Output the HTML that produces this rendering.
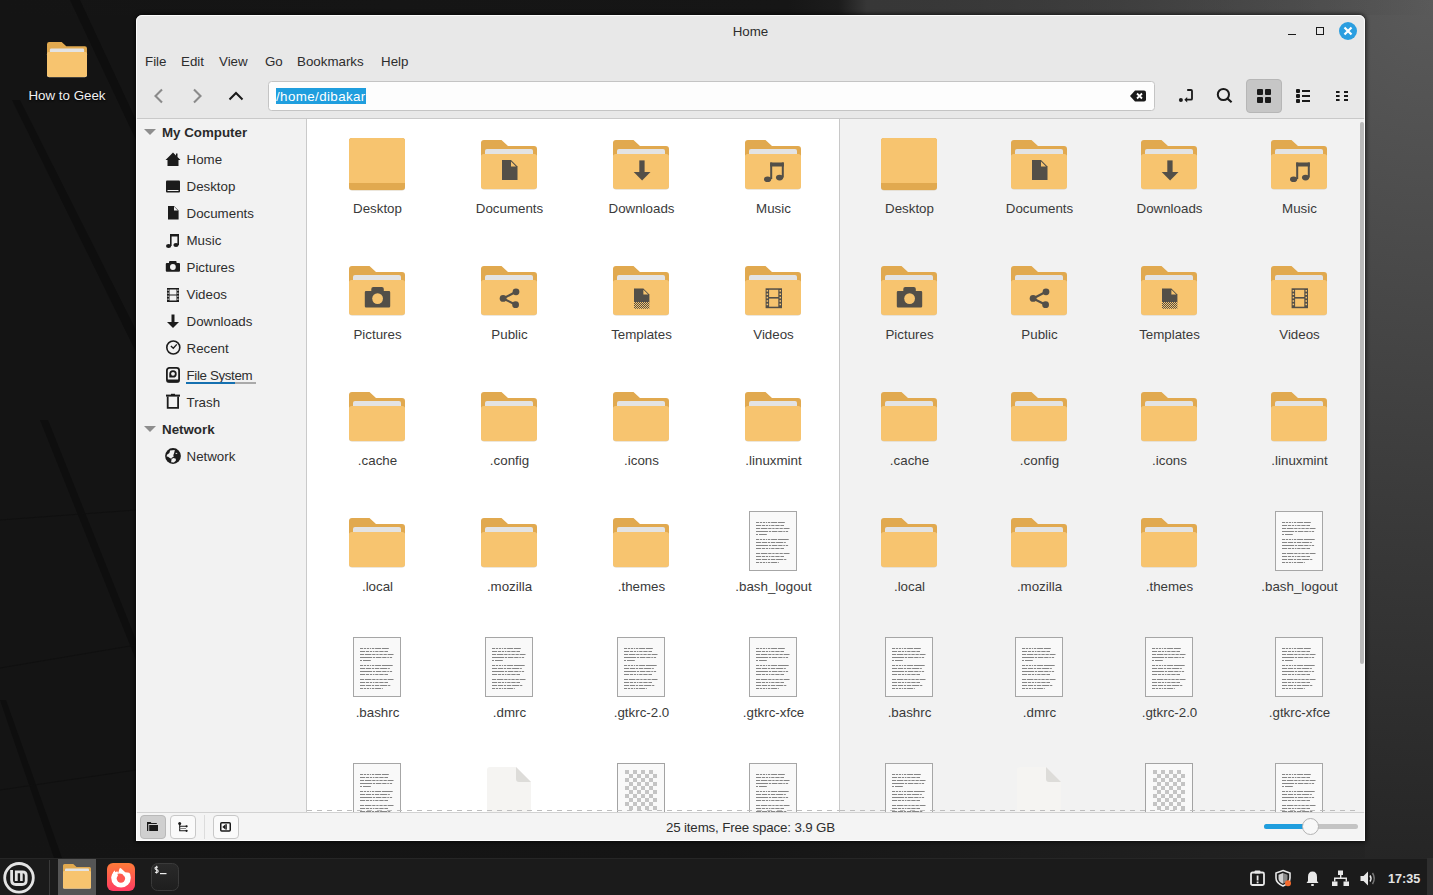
<!DOCTYPE html>
<html><head><meta charset="utf-8"><title>Home</title>
<style>
html,body{margin:0;padding:0;}
body{width:1433px;height:895px;overflow:hidden;position:relative;background:#141414;font-family:"Liberation Sans", sans-serif;}
.t{position:absolute;line-height:20px;white-space:nowrap;}
svg{display:block;overflow:visible;}
</style></head><body>

<svg style="position:absolute;left:0px;top:0px;" width="1433" height="895" viewBox="0 0 1433 895"><defs><radialGradient id="lg" gradientUnits="userSpaceOnUse" cx="1433" cy="0" r="880"><stop offset="0" stop-color="#5a5a5a"/><stop offset="0.6" stop-color="#393939"/><stop offset="1" stop-color="#242424"/></radialGradient><linearGradient id="bs" x1="0" y1="0" x2="1" y2="0"><stop offset="0" stop-color="#141414"/><stop offset="0.5" stop-color="#151515"/><stop offset="1" stop-color="#252525"/></linearGradient><linearGradient id="ts" x1="0" y1="0" x2="1" y2="0"><stop offset="0" stop-color="#141414"/><stop offset="0.55" stop-color="#161616"/><stop offset="0.585" stop-color="#1c1c1c"/><stop offset="0.605" stop-color="#373737"/><stop offset="1" stop-color="#3a3a3a" stop-opacity="0"/></linearGradient><pattern id="hatch" width="2" height="2" patternUnits="userSpaceOnUse"><rect width="1" height="1" fill="#534f48"/><rect x="1" y="1" width="1" height="1" fill="#534f48"/></pattern></defs><rect width="1433" height="895" fill="#141414"/><rect x="0" y="841" width="1433" height="17" fill="url(#bs)"/><path d="M862 0H1433V858H1365V60H1320V15H870Z" fill="url(#lg)"/><rect x="0" y="0" width="1433" height="15" fill="url(#ts)"/><g fill="#0e0e0e"><path d="M70 0L80 0L136 120L136 140Z"/><path d="M12 100L20 100L136 330L136 352Z"/><path d="M40 420L48 420L136 640L136 660Z"/><path d="M0 700L6 700L62 858L54 858Z"/></g><g stroke="#101010" stroke-width="1.2"><path d="M0 520L136 510"/><path d="M0 668L136 645"/><path d="M0 790L136 770"/></g></svg>
<svg style="position:absolute;left:47px;top:42px;" width="40" height="35.7" viewBox="0 0 56 50"><path d="M3 0H20.5L27 6H53Q56 6 56 9V30H0V3Q0 0 3 0Z" fill="#e1a94f"/><rect x="4" y="9" width="48" height="14" rx="2" fill="#e3e3e3"/><rect x="0" y="14.5" width="56" height="35" rx="3" fill="#d9cdb8"/><rect x="0" y="14" width="56" height="35" rx="3" fill="#f7c46f"/></svg>
<div class="t" style="left:-83.0px;width:300px;text-align:center;top:86.38px;font-size:13.33px;color:#f0f0f0;font-weight:normal;text-shadow:0 1px 2px #000;">How to Geek</div>
<div style="position:absolute;left:136px;top:15px;width:1229px;height:826px;box-shadow:0 0 4px 1px rgba(0,0,0,0.65);border-radius:6px 6px 0 0;"></div>
<div style="position:absolute;left:136px;top:15px;width:1229px;height:826px;background:#e8e8e8;border-radius:6px 6px 0 0;overflow:hidden;"></div>
<div class="t" style="left:600.5px;width:300px;text-align:center;top:22.38px;font-size:13.33px;color:#2d2d2d;font-weight:normal;">Home</div>
<div style="position:absolute;left:1288px;top:33.5px;width:8px;height:1.6px;background:#1a1a1a;"></div>
<div style="position:absolute;left:1316px;top:27px;width:8px;height:8px;border:1.6px solid #1a1a1a;box-sizing:border-box;"></div>
<svg style="position:absolute;left:1339px;top:22px;" width="18" height="18" viewBox="0 0 18 18"><circle cx="9" cy="9" r="9" fill="#2b9ee0"/><path d="M5.5 5.5L12.5 12.5M12.5 5.5L5.5 12.5" stroke="#fff" stroke-width="2.2"/></svg>
<div class="t" style="left:145px;top:52.38px;font-size:13.33px;color:#2d2d2d;font-weight:normal;">File</div>
<div class="t" style="left:181px;top:52.38px;font-size:13.33px;color:#2d2d2d;font-weight:normal;">Edit</div>
<div class="t" style="left:219px;top:52.38px;font-size:13.33px;color:#2d2d2d;font-weight:normal;">View</div>
<div class="t" style="left:265px;top:52.38px;font-size:13.33px;color:#2d2d2d;font-weight:normal;">Go</div>
<div class="t" style="left:297px;top:52.38px;font-size:13.33px;color:#2d2d2d;font-weight:normal;">Bookmarks</div>
<div class="t" style="left:381px;top:52.38px;font-size:13.33px;color:#2d2d2d;font-weight:normal;">Help</div>
<svg style="position:absolute;left:150.5px;top:88px;" width="16" height="16" viewBox="0 0 16 16"><path d="M11 1.5L4.5 8L11 14.5" stroke="#8a8a8a" stroke-width="2.1" fill="none"/></svg>
<svg style="position:absolute;left:188.5px;top:88px;" width="16" height="16" viewBox="0 0 16 16"><path d="M5 1.5L11.5 8L5 14.5" stroke="#8a8a8a" stroke-width="2.1" fill="none"/></svg>
<svg style="position:absolute;left:228px;top:88px;" width="16" height="16" viewBox="0 0 16 16"><path d="M1.5 11.5L8 5L14.5 11.5" stroke="#1a1a1a" stroke-width="2" fill="none"/></svg>
<div style="position:absolute;left:267.5px;top:81px;width:887.5px;height:30px;background:#fdfdfd;border:1px solid #c4c4c4;border-radius:3.5px;box-sizing:border-box;"></div>
<div style="position:absolute;left:276px;top:88px;width:90px;height:16px;background:#1f9ede;"></div>
<div class="t" style="left:276px;top:87.38px;font-size:13.33px;color:#ffffff;font-weight:normal;letter-spacing:0.4px;">/home/dibakar</div>
<svg style="position:absolute;left:1130px;top:90px;" width="16" height="12" viewBox="0 0 16 12"><path d="M0 6L5 0.5H14Q16 0.5 16 2.5V9.5Q16 11.5 14 11.5H5Z" fill="#1a1a1a"/><path d="M7 3.5L12 8.5M12 3.5L7 8.5" stroke="#fff" stroke-width="1.8"/></svg>
<svg style="position:absolute;left:1179px;top:88px;" width="16" height="16" viewBox="0 0 16 16"><circle cx="1.9" cy="11.9" r="2" fill="#1a1a1a"/><path d="M8.2 2H12Q13 2 13 3V10.7Q13 11.7 12 11.7H7" stroke="#1a1a1a" stroke-width="1.8" fill="none"/><path d="M5.3 11.7L8.2 9V14.6Z" fill="#1a1a1a"/></svg>
<svg style="position:absolute;left:1216px;top:88px;" width="17" height="16" viewBox="0 0 17 16"><circle cx="7.4" cy="6.5" r="5.6" stroke="#1a1a1a" stroke-width="2" fill="none"/><path d="M11.3 10.4L15.6 14.3" stroke="#1a1a1a" stroke-width="2.1"/></svg>
<div style="position:absolute;left:1246px;top:79px;width:36px;height:34px;background:#c6c6c6;border:1px solid #b6b6b6;border-radius:4px;box-sizing:border-box;"></div>
<svg style="position:absolute;left:1257px;top:89px;" width="15" height="15" viewBox="0 0 15 15"><rect x="0" y="0" width="6" height="6" rx="1" fill="#1a1a1a"/><rect x="8" y="0" width="6" height="6" rx="1" fill="#1a1a1a"/><rect x="0" y="8" width="6" height="6" rx="1" fill="#1a1a1a"/><rect x="8" y="8" width="6" height="6" rx="1" fill="#1a1a1a"/></svg>
<svg style="position:absolute;left:1296px;top:89px;" width="15" height="15" viewBox="0 0 15 15"><rect x="0" y="0" width="4" height="4" rx="1" fill="#1a1a1a"/><rect x="0" y="5" width="4" height="4" rx="1" fill="#1a1a1a"/><rect x="0" y="10" width="4" height="4" rx="1" fill="#1a1a1a"/><rect x="6" y="1" width="8" height="2" fill="#1a1a1a"/><rect x="6" y="6" width="8" height="2" fill="#1a1a1a"/><rect x="6" y="11" width="8" height="2" fill="#1a1a1a"/></svg>
<svg style="position:absolute;left:1336px;top:91px;" width="13" height="11" viewBox="0 0 13 11"><rect x="0" y="0" width="3.6" height="2" fill="#1a1a1a"/><rect x="0" y="4" width="3.6" height="2" fill="#1a1a1a"/><rect x="0" y="8" width="3.6" height="2" fill="#1a1a1a"/><rect x="8" y="0" width="4" height="2" fill="#1a1a1a"/><rect x="8" y="4" width="4" height="2" fill="#1a1a1a"/><rect x="8" y="8" width="4" height="2" fill="#1a1a1a"/></svg>
<div style="position:absolute;left:136px;top:118px;width:1229px;height:1px;background:#c9c9c9;"></div>
<div style="position:absolute;left:136px;top:119px;width:170px;height:693px;background:#f2f2f2;"></div>
<div style="position:absolute;left:306px;top:119px;width:1px;height:693px;background:#cacaca;"></div>
<svg style="position:absolute;left:144px;top:129px;" width="12" height="6" viewBox="0 0 12 6"><path d="M0 0H12L6 6Z" fill="#8e8e8e"/></svg>
<div class="t" style="left:162px;top:123.38px;font-size:13.33px;color:#2a2a2a;font-weight:bold;">My Computer</div>
<svg style="position:absolute;left:165px;top:152px;" width="16" height="16" viewBox="0 0 16 16"><path d="M8 0.5L0.5 8H2.5V14H13.5V8H15.5L12.5 5V1.5H11V3.5Z" fill="#1c1c1c"/></svg>
<div class="t" style="left:186.5px;top:150.38px;font-size:13.33px;color:#2e2e2e;font-weight:normal;">Home</div>
<svg style="position:absolute;left:165px;top:179px;" width="16" height="16" viewBox="0 0 16 16"><rect x="1" y="1.5" width="14" height="12" rx="1" fill="#1c1c1c"/><rect x="2.5" y="11" width="11" height="1" fill="#f2f2f2"/></svg>
<div class="t" style="left:186.5px;top:177.38px;font-size:13.33px;color:#2e2e2e;font-weight:normal;">Desktop</div>
<svg style="position:absolute;left:165px;top:206px;" width="16" height="16" viewBox="0 0 16 16"><path d="M3 0H9L13.6 4.6V13.6H3Z" fill="#1c1c1c"/><path d="M9 0.6V4.6H13" fill="#f2f2f2"/></svg>
<div class="t" style="left:186.5px;top:204.38px;font-size:13.33px;color:#2e2e2e;font-weight:normal;">Documents</div>
<svg style="position:absolute;left:165px;top:233px;" width="16" height="16" viewBox="0 0 16 16"><rect x="5" y="1" width="9" height="2.5" fill="#1c1c1c"/><rect x="5" y="1" width="1.6" height="12" fill="#1c1c1c"/><rect x="12.4" y="1" width="1.6" height="11" fill="#1c1c1c"/><ellipse cx="3.6" cy="13" rx="2.6" ry="2" fill="#1c1c1c"/><ellipse cx="11" cy="12" rx="2.6" ry="2" fill="#1c1c1c"/></svg>
<div class="t" style="left:186.5px;top:231.38px;font-size:13.33px;color:#2e2e2e;font-weight:normal;">Music</div>
<svg style="position:absolute;left:165px;top:260px;" width="16" height="16" viewBox="0 0 16 16"><path d="M4 3V2Q4 0.9 5 0.9H10.6Q11.6 0.9 11.6 2V3H14Q15 3 15 4V10.7Q15 11.7 14 11.7H1.8Q0.8 11.7 0.8 10.7V4Q0.8 3 1.8 3Z" fill="#1c1c1c"/><circle cx="7.9" cy="7" r="2.9" fill="#f2f2f2"/></svg>
<div class="t" style="left:186.5px;top:258.38px;font-size:13.33px;color:#2e2e2e;font-weight:normal;">Pictures</div>
<svg style="position:absolute;left:165px;top:287px;" width="16" height="16" viewBox="0 0 16 16"><rect x="2" y="1" width="12" height="14" fill="#1c1c1c"/><rect x="4.5" y="2.5" width="7" height="5" fill="#f2f2f2"/><rect x="4.5" y="8.5" width="7" height="5" fill="#f2f2f2"/><rect x="2.6" y="2.5" width="1" height="1.5" fill="#f2f2f2"/><rect x="12.4" y="2.5" width="1" height="1.5" fill="#f2f2f2"/><rect x="2.6" y="5.5" width="1" height="1.5" fill="#f2f2f2"/><rect x="12.4" y="5.5" width="1" height="1.5" fill="#f2f2f2"/><rect x="2.6" y="8.5" width="1" height="1.5" fill="#f2f2f2"/><rect x="12.4" y="8.5" width="1" height="1.5" fill="#f2f2f2"/><rect x="2.6" y="11.5" width="1" height="1.5" fill="#f2f2f2"/><rect x="12.4" y="11.5" width="1" height="1.5" fill="#f2f2f2"/></svg>
<div class="t" style="left:186.5px;top:285.38px;font-size:13.33px;color:#2e2e2e;font-weight:normal;">Videos</div>
<svg style="position:absolute;left:165px;top:314px;" width="16" height="16" viewBox="0 0 16 16"><rect x="6.5" y="0.5" width="3" height="8" fill="#1c1c1c"/><path d="M2 8H14L8 14Z" fill="#1c1c1c"/></svg>
<div class="t" style="left:186.5px;top:312.38px;font-size:13.33px;color:#2e2e2e;font-weight:normal;">Downloads</div>
<svg style="position:absolute;left:165px;top:341px;" width="16" height="16" viewBox="0 0 16 16"><circle cx="8.3" cy="6.5" r="6.5" stroke="#1c1c1c" stroke-width="1.6" fill="none"/><path d="M5.9 5L8.3 7.2L11.8 3.4" stroke="#1c1c1c" stroke-width="1.4" fill="none"/></svg>
<div class="t" style="left:186.5px;top:339.38px;font-size:13.33px;color:#2e2e2e;font-weight:normal;">Recent</div>
<svg style="position:absolute;left:165px;top:368px;" width="16" height="16" viewBox="0 0 16 16"><rect x="1.9" y="-0.1" width="12.2" height="13.9" rx="2.5" stroke="#1c1c1c" stroke-width="1.8" fill="none"/><rect x="1.5" y="11.6" width="13" height="3" rx="1" fill="#1c1c1c"/><path d="M4.3 9.6V5.8A3.7 3.7 0 1 1 8 9.6Z" fill="#1c1c1c"/><circle cx="8" cy="5.8" r="1.9" fill="#f2f2f2"/></svg>
<div class="t" style="left:186.5px;top:366.38px;font-size:13.33px;color:#2e2e2e;font-weight:normal;letter-spacing:-0.35px;">File System</div>
<svg style="position:absolute;left:165px;top:395px;" width="16" height="16" viewBox="0 0 16 16"><rect x="1" y="-0.4" width="14" height="2" fill="#1c1c1c"/><rect x="6" y="-1.2" width="4" height="1.5" fill="#1c1c1c"/><path d="M2.7 1.6V12.8H13.1V1.6" stroke="#1c1c1c" stroke-width="1.8" fill="none"/></svg>
<div class="t" style="left:186.5px;top:393.38px;font-size:13.33px;color:#2e2e2e;font-weight:normal;">Trash</div>
<div style="position:absolute;left:186px;top:382px;width:70px;height:2px;background:#aaaaaa;"></div>
<div style="position:absolute;left:186px;top:382px;width:49px;height:2px;background:#1570b0;"></div>
<svg style="position:absolute;left:144px;top:426px;" width="12" height="6" viewBox="0 0 12 6"><path d="M0 0H12L6 6Z" fill="#8e8e8e"/></svg>
<div class="t" style="left:162px;top:420.38px;font-size:13.33px;color:#2a2a2a;font-weight:bold;">Network</div>
<svg style="position:absolute;left:165px;top:449px;" width="16" height="16" viewBox="0 0 16 16"><circle cx="8" cy="7" r="7.9" fill="#1c1c1c"/><path d="M5.1 1.4L9.8 1.1L9.3 3.4L8.3 6.3L8.8 7.5L6.8 8.8L6.3 9.8L4.4 8.8L3.1 7.8L1.6 7.6L2 5.8L4.4 4.1Z" fill="#f2f2f2"/><path d="M6.6 10L8.5 8.9L10.8 9.8L10.8 11.7L8.8 13.6L6.1 13.2Z" fill="#f2f2f2"/><rect x="10.6" y="3.9" width="1.6" height="0.9" fill="#f2f2f2"/></svg>
<div class="t" style="left:186.5px;top:447.38px;font-size:13.33px;color:#2e2e2e;font-weight:normal;">Network</div>
<div style="position:absolute;left:307px;top:119px;width:532px;height:693px;background:#ffffff;"></div>
<div style="position:absolute;left:839px;top:119px;width:1px;height:693px;background:#c8c8c8;"></div>
<div style="position:absolute;left:840px;top:119px;width:525px;height:693px;background:#f2f2f2;"></div>
<svg style="position:absolute;left:349px;top:138px;" width="56" height="53" viewBox="0 0 56 53"><rect x="0" y="0.5" width="56" height="52" rx="3" fill="#d9cdb8"/><rect x="0" y="0" width="56" height="52" rx="3" fill="#e1a94f"/><path d="M3 0H53Q56 0 56 3V45H0V3Q0 0 3 0Z" fill="#f7c46f"/></svg>
<div class="t" style="left:312.5px;width:130px;text-align:center;top:199.38px;font-size:13.33px;color:#3a3a3a;font-weight:normal;">Desktop</div>
<svg style="position:absolute;left:481px;top:140px;" width="56" height="50" viewBox="0 0 56 50"><path d="M3 0H20.5L27 6H53Q56 6 56 9V30H0V3Q0 0 3 0Z" fill="#e1a94f"/><rect x="4" y="9" width="48" height="14" rx="2" fill="#e3e3e3"/><rect x="0" y="14.5" width="56" height="35" rx="3" fill="#d9cdb8"/><rect x="0" y="14" width="56" height="35" rx="3" fill="#f7c46f"/><path d="M21 20H30L36.5 26.5V40H21Z" fill="#534f48"/><path d="M30 21.5V26.5H35Z" fill="#f7c46f"/></svg>
<div class="t" style="left:444.5px;width:130px;text-align:center;top:199.38px;font-size:13.33px;color:#3a3a3a;font-weight:normal;">Documents</div>
<svg style="position:absolute;left:613px;top:140px;" width="56" height="50" viewBox="0 0 56 50"><path d="M3 0H20.5L27 6H53Q56 6 56 9V30H0V3Q0 0 3 0Z" fill="#e1a94f"/><rect x="4" y="9" width="48" height="14" rx="2" fill="#e3e3e3"/><rect x="0" y="14.5" width="56" height="35" rx="3" fill="#d9cdb8"/><rect x="0" y="14" width="56" height="35" rx="3" fill="#f7c46f"/><rect x="26.3" y="20.4" width="5.3" height="12.5" fill="#534f48"/><path d="M20.7 32H37.5L29.1 40.4Z" fill="#534f48"/></svg>
<div class="t" style="left:576.5px;width:130px;text-align:center;top:199.38px;font-size:13.33px;color:#3a3a3a;font-weight:normal;">Downloads</div>
<svg style="position:absolute;left:745px;top:140px;" width="56" height="50" viewBox="0 0 56 50"><path d="M3 0H20.5L27 6H53Q56 6 56 9V30H0V3Q0 0 3 0Z" fill="#e1a94f"/><rect x="4" y="9" width="48" height="14" rx="2" fill="#e3e3e3"/><rect x="0" y="14.5" width="56" height="35" rx="3" fill="#d9cdb8"/><rect x="0" y="14" width="56" height="35" rx="3" fill="#f7c46f"/><rect x="25.2" y="22.5" width="13.6" height="4" fill="#534f48"/><rect x="25.2" y="22.5" width="2" height="16.5" fill="#534f48"/><rect x="36.8" y="22.5" width="2" height="15" fill="#534f48"/><ellipse cx="22.6" cy="39.2" rx="3.6" ry="2.8" fill="#534f48"/><ellipse cx="34.6" cy="37.6" rx="3.6" ry="2.8" fill="#534f48"/></svg>
<div class="t" style="left:708.5px;width:130px;text-align:center;top:199.38px;font-size:13.33px;color:#3a3a3a;font-weight:normal;">Music</div>
<svg style="position:absolute;left:349px;top:266px;" width="56" height="50" viewBox="0 0 56 50"><path d="M3 0H20.5L27 6H53Q56 6 56 9V30H0V3Q0 0 3 0Z" fill="#e1a94f"/><rect x="4" y="9" width="48" height="14" rx="2" fill="#e3e3e3"/><rect x="0" y="14.5" width="56" height="35" rx="3" fill="#d9cdb8"/><rect x="0" y="14" width="56" height="35" rx="3" fill="#f7c46f"/><path d="M22.3 25V23Q22.3 21 24.3 21H32.8Q34.8 21 34.8 23V25H40Q41.2 25 41.2 26.2V40.3Q41.2 41.5 40 41.5H17Q15.8 41.5 15.8 40.3V26.2Q15.8 25 17 25Z" fill="#534f48"/><circle cx="28.6" cy="32.6" r="5.4" fill="#f7c46f"/></svg>
<div class="t" style="left:312.5px;width:130px;text-align:center;top:325.38px;font-size:13.33px;color:#3a3a3a;font-weight:normal;">Pictures</div>
<svg style="position:absolute;left:481px;top:266px;" width="56" height="50" viewBox="0 0 56 50"><path d="M3 0H20.5L27 6H53Q56 6 56 9V30H0V3Q0 0 3 0Z" fill="#e1a94f"/><rect x="4" y="9" width="48" height="14" rx="2" fill="#e3e3e3"/><rect x="0" y="14.5" width="56" height="35" rx="3" fill="#d9cdb8"/><rect x="0" y="14" width="56" height="35" rx="3" fill="#f7c46f"/><path d="M35 25.8L22.1 32.4L34.6 38.7" stroke="#534f48" stroke-width="2.2" fill="none"/><circle cx="35" cy="25.8" r="3.4" fill="#534f48"/><circle cx="22.1" cy="32.4" r="3.4" fill="#534f48"/><circle cx="34.6" cy="38.7" r="3.4" fill="#534f48"/></svg>
<div class="t" style="left:444.5px;width:130px;text-align:center;top:325.38px;font-size:13.33px;color:#3a3a3a;font-weight:normal;">Public</div>
<svg style="position:absolute;left:613px;top:266px;" width="56" height="50" viewBox="0 0 56 50"><path d="M3 0H20.5L27 6H53Q56 6 56 9V30H0V3Q0 0 3 0Z" fill="#e1a94f"/><rect x="4" y="9" width="48" height="14" rx="2" fill="#e3e3e3"/><rect x="0" y="14.5" width="56" height="35" rx="3" fill="#d9cdb8"/><rect x="0" y="14" width="56" height="35" rx="3" fill="#f7c46f"/><path d="M21 22.6H30.4L36.4 28.6V36H21Z" fill="#534f48"/><path d="M30.4 23.8V28.6H35.2Z" fill="#f7c46f"/><rect x="21" y="36" width="15.4" height="6.8" fill="url(#hatch)"/></svg>
<div class="t" style="left:576.5px;width:130px;text-align:center;top:325.38px;font-size:13.33px;color:#3a3a3a;font-weight:normal;">Templates</div>
<svg style="position:absolute;left:745px;top:266px;" width="56" height="50" viewBox="0 0 56 50"><path d="M3 0H20.5L27 6H53Q56 6 56 9V30H0V3Q0 0 3 0Z" fill="#e1a94f"/><rect x="4" y="9" width="48" height="14" rx="2" fill="#e3e3e3"/><rect x="0" y="14.5" width="56" height="35" rx="3" fill="#d9cdb8"/><rect x="0" y="14" width="56" height="35" rx="3" fill="#f7c46f"/><rect x="20.6" y="22.3" width="16.4" height="19.9" fill="#534f48"/><rect x="24.1" y="23.8" width="9.2" height="7.2" fill="#f7c46f"/><rect x="24.1" y="32.6" width="9.2" height="8.1" fill="#f7c46f"/><rect x="21.6" y="24.0" width="1.5" height="1.6" fill="#f7c46f"/><rect x="34.5" y="24.0" width="1.5" height="1.6" fill="#f7c46f"/><rect x="21.6" y="27.4" width="1.5" height="1.6" fill="#f7c46f"/><rect x="34.5" y="27.4" width="1.5" height="1.6" fill="#f7c46f"/><rect x="21.6" y="30.8" width="1.5" height="1.6" fill="#f7c46f"/><rect x="34.5" y="30.8" width="1.5" height="1.6" fill="#f7c46f"/><rect x="21.6" y="34.2" width="1.5" height="1.6" fill="#f7c46f"/><rect x="34.5" y="34.2" width="1.5" height="1.6" fill="#f7c46f"/><rect x="21.6" y="37.6" width="1.5" height="1.6" fill="#f7c46f"/><rect x="34.5" y="37.6" width="1.5" height="1.6" fill="#f7c46f"/></svg>
<div class="t" style="left:708.5px;width:130px;text-align:center;top:325.38px;font-size:13.33px;color:#3a3a3a;font-weight:normal;">Videos</div>
<svg style="position:absolute;left:349px;top:392px;" width="56" height="50" viewBox="0 0 56 50"><path d="M3 0H20.5L27 6H53Q56 6 56 9V30H0V3Q0 0 3 0Z" fill="#e1a94f"/><rect x="4" y="9" width="48" height="14" rx="2" fill="#e3e3e3"/><rect x="0" y="14.5" width="56" height="35" rx="3" fill="#d9cdb8"/><rect x="0" y="14" width="56" height="35" rx="3" fill="#f7c46f"/></svg>
<div class="t" style="left:312.5px;width:130px;text-align:center;top:451.38px;font-size:13.33px;color:#3a3a3a;font-weight:normal;">.cache</div>
<svg style="position:absolute;left:481px;top:392px;" width="56" height="50" viewBox="0 0 56 50"><path d="M3 0H20.5L27 6H53Q56 6 56 9V30H0V3Q0 0 3 0Z" fill="#e1a94f"/><rect x="4" y="9" width="48" height="14" rx="2" fill="#e3e3e3"/><rect x="0" y="14.5" width="56" height="35" rx="3" fill="#d9cdb8"/><rect x="0" y="14" width="56" height="35" rx="3" fill="#f7c46f"/></svg>
<div class="t" style="left:444.5px;width:130px;text-align:center;top:451.38px;font-size:13.33px;color:#3a3a3a;font-weight:normal;">.config</div>
<svg style="position:absolute;left:613px;top:392px;" width="56" height="50" viewBox="0 0 56 50"><path d="M3 0H20.5L27 6H53Q56 6 56 9V30H0V3Q0 0 3 0Z" fill="#e1a94f"/><rect x="4" y="9" width="48" height="14" rx="2" fill="#e3e3e3"/><rect x="0" y="14.5" width="56" height="35" rx="3" fill="#d9cdb8"/><rect x="0" y="14" width="56" height="35" rx="3" fill="#f7c46f"/></svg>
<div class="t" style="left:576.5px;width:130px;text-align:center;top:451.38px;font-size:13.33px;color:#3a3a3a;font-weight:normal;">.icons</div>
<svg style="position:absolute;left:745px;top:392px;" width="56" height="50" viewBox="0 0 56 50"><path d="M3 0H20.5L27 6H53Q56 6 56 9V30H0V3Q0 0 3 0Z" fill="#e1a94f"/><rect x="4" y="9" width="48" height="14" rx="2" fill="#e3e3e3"/><rect x="0" y="14.5" width="56" height="35" rx="3" fill="#d9cdb8"/><rect x="0" y="14" width="56" height="35" rx="3" fill="#f7c46f"/></svg>
<div class="t" style="left:708.5px;width:130px;text-align:center;top:451.38px;font-size:13.33px;color:#3a3a3a;font-weight:normal;">.linuxmint</div>
<svg style="position:absolute;left:349px;top:518px;" width="56" height="50" viewBox="0 0 56 50"><path d="M3 0H20.5L27 6H53Q56 6 56 9V30H0V3Q0 0 3 0Z" fill="#e1a94f"/><rect x="4" y="9" width="48" height="14" rx="2" fill="#e3e3e3"/><rect x="0" y="14.5" width="56" height="35" rx="3" fill="#d9cdb8"/><rect x="0" y="14" width="56" height="35" rx="3" fill="#f7c46f"/></svg>
<div class="t" style="left:312.5px;width:130px;text-align:center;top:577.38px;font-size:13.33px;color:#3a3a3a;font-weight:normal;">.local</div>
<svg style="position:absolute;left:481px;top:518px;" width="56" height="50" viewBox="0 0 56 50"><path d="M3 0H20.5L27 6H53Q56 6 56 9V30H0V3Q0 0 3 0Z" fill="#e1a94f"/><rect x="4" y="9" width="48" height="14" rx="2" fill="#e3e3e3"/><rect x="0" y="14.5" width="56" height="35" rx="3" fill="#d9cdb8"/><rect x="0" y="14" width="56" height="35" rx="3" fill="#f7c46f"/></svg>
<div class="t" style="left:444.5px;width:130px;text-align:center;top:577.38px;font-size:13.33px;color:#3a3a3a;font-weight:normal;">.mozilla</div>
<svg style="position:absolute;left:613px;top:518px;" width="56" height="50" viewBox="0 0 56 50"><path d="M3 0H20.5L27 6H53Q56 6 56 9V30H0V3Q0 0 3 0Z" fill="#e1a94f"/><rect x="4" y="9" width="48" height="14" rx="2" fill="#e3e3e3"/><rect x="0" y="14.5" width="56" height="35" rx="3" fill="#d9cdb8"/><rect x="0" y="14" width="56" height="35" rx="3" fill="#f7c46f"/></svg>
<div class="t" style="left:576.5px;width:130px;text-align:center;top:577.38px;font-size:13.33px;color:#3a3a3a;font-weight:normal;">.themes</div>
<svg style="position:absolute;left:749px;top:511px;" width="48" height="60" viewBox="0 0 48 60"><rect x="0.5" y="0.5" width="47" height="59" fill="#f9f9f9" stroke="#a6a6a6"/><line x1="7" y1="11.5" x2="35.8" y2="11.5" stroke="#858585" stroke-width="1" stroke-dasharray="3 0.8 2.3 0.8 2.3 0.8 1.2 0.8 2.3 0.8 6 0.8 7 50"/><line x1="7" y1="14.5" x2="35" y2="14.5" stroke="#858585" stroke-width="1" stroke-dasharray="5 0.8 3.3 0.8 2.3 0.8 1.4 0.8 3.3 0.8 4.3 0.8 4.1 50"/><line x1="7" y1="17.5" x2="40.5" y2="17.5" stroke="#858585" stroke-width="1" stroke-dasharray="4.1 0.8 6.5 0.8 3.3 0.8 2.3 0.8 3.3 0.8 3.3 0.8 6.6 50"/><line x1="7" y1="20.5" x2="39.1" y2="20.5" stroke="#858585" stroke-width="1" stroke-dasharray="12 0.8 2.3 0.8 5.5 0.8 4.3 0.8 1.6 0.8 3 50"/><line x1="7" y1="23.5" x2="17.8" y2="23.5" stroke="#858585" stroke-width="1" stroke-dasharray="2 1 7.8 50"/><line x1="7" y1="28.5" x2="39.7" y2="28.5" stroke="#858585" stroke-width="1" stroke-dasharray="3 0.8 2.3 0.8 2.3 0.8 1.2 0.8 2.3 0.8 6 0.8 11 50"/><line x1="7" y1="31.5" x2="36.8" y2="31.5" stroke="#858585" stroke-width="1" stroke-dasharray="5 0.8 5.3 0.8 2.3 0.8 4.3 0.8 7.2 0.8 2.2 50"/><line x1="7" y1="34.5" x2="39.1" y2="34.5" stroke="#858585" stroke-width="1" stroke-dasharray="12 0.8 2.3 0.8 5.5 0.8 4.3 0.8 1.6 0.8 3 50"/><line x1="7" y1="37.5" x2="35" y2="37.5" stroke="#858585" stroke-width="1" stroke-dasharray="5 0.8 3.3 0.8 2.3 0.8 1.4 0.8 3.3 0.8 4.3 0.8 4.1 50"/><line x1="7" y1="42.5" x2="40.5" y2="42.5" stroke="#858585" stroke-width="1" stroke-dasharray="4.1 0.8 6.5 0.8 3.3 0.8 2.3 0.8 3.3 0.8 3.3 0.8 6.6 50"/><line x1="7" y1="45.5" x2="35" y2="45.5" stroke="#858585" stroke-width="1" stroke-dasharray="5 0.8 3.3 0.8 2.3 0.8 1.4 0.8 3.3 0.8 4.3 0.8 4.1 50"/><line x1="7" y1="48.5" x2="37.8" y2="48.5" stroke="#858585" stroke-width="1" stroke-dasharray="5 0.8 5.3 0.8 2.3 0.8 4.3 0.8 7.2 0.8 2.2 50"/><line x1="7" y1="51.5" x2="29.8" y2="51.5" stroke="#858585" stroke-width="1" stroke-dasharray="3 0.8 2.3 0.8 2.3 0.8 1.2 0.8 2.3 0.8 6 0.8 7 50"/></svg>
<div class="t" style="left:708.5px;width:130px;text-align:center;top:577.38px;font-size:13.33px;color:#3a3a3a;font-weight:normal;">.bash_logout</div>
<svg style="position:absolute;left:353px;top:637px;" width="48" height="60" viewBox="0 0 48 60"><rect x="0.5" y="0.5" width="47" height="59" fill="#f9f9f9" stroke="#a6a6a6"/><line x1="7" y1="11.5" x2="35.8" y2="11.5" stroke="#858585" stroke-width="1" stroke-dasharray="3 0.8 2.3 0.8 2.3 0.8 1.2 0.8 2.3 0.8 6 0.8 7 50"/><line x1="7" y1="14.5" x2="35" y2="14.5" stroke="#858585" stroke-width="1" stroke-dasharray="5 0.8 3.3 0.8 2.3 0.8 1.4 0.8 3.3 0.8 4.3 0.8 4.1 50"/><line x1="7" y1="17.5" x2="40.5" y2="17.5" stroke="#858585" stroke-width="1" stroke-dasharray="4.1 0.8 6.5 0.8 3.3 0.8 2.3 0.8 3.3 0.8 3.3 0.8 6.6 50"/><line x1="7" y1="20.5" x2="39.1" y2="20.5" stroke="#858585" stroke-width="1" stroke-dasharray="12 0.8 2.3 0.8 5.5 0.8 4.3 0.8 1.6 0.8 3 50"/><line x1="7" y1="23.5" x2="17.8" y2="23.5" stroke="#858585" stroke-width="1" stroke-dasharray="2 1 7.8 50"/><line x1="7" y1="28.5" x2="39.7" y2="28.5" stroke="#858585" stroke-width="1" stroke-dasharray="3 0.8 2.3 0.8 2.3 0.8 1.2 0.8 2.3 0.8 6 0.8 11 50"/><line x1="7" y1="31.5" x2="36.8" y2="31.5" stroke="#858585" stroke-width="1" stroke-dasharray="5 0.8 5.3 0.8 2.3 0.8 4.3 0.8 7.2 0.8 2.2 50"/><line x1="7" y1="34.5" x2="39.1" y2="34.5" stroke="#858585" stroke-width="1" stroke-dasharray="12 0.8 2.3 0.8 5.5 0.8 4.3 0.8 1.6 0.8 3 50"/><line x1="7" y1="37.5" x2="35" y2="37.5" stroke="#858585" stroke-width="1" stroke-dasharray="5 0.8 3.3 0.8 2.3 0.8 1.4 0.8 3.3 0.8 4.3 0.8 4.1 50"/><line x1="7" y1="42.5" x2="40.5" y2="42.5" stroke="#858585" stroke-width="1" stroke-dasharray="4.1 0.8 6.5 0.8 3.3 0.8 2.3 0.8 3.3 0.8 3.3 0.8 6.6 50"/><line x1="7" y1="45.5" x2="35" y2="45.5" stroke="#858585" stroke-width="1" stroke-dasharray="5 0.8 3.3 0.8 2.3 0.8 1.4 0.8 3.3 0.8 4.3 0.8 4.1 50"/><line x1="7" y1="48.5" x2="37.8" y2="48.5" stroke="#858585" stroke-width="1" stroke-dasharray="5 0.8 5.3 0.8 2.3 0.8 4.3 0.8 7.2 0.8 2.2 50"/><line x1="7" y1="51.5" x2="29.8" y2="51.5" stroke="#858585" stroke-width="1" stroke-dasharray="3 0.8 2.3 0.8 2.3 0.8 1.2 0.8 2.3 0.8 6 0.8 7 50"/></svg>
<div class="t" style="left:312.5px;width:130px;text-align:center;top:703.38px;font-size:13.33px;color:#3a3a3a;font-weight:normal;">.bashrc</div>
<svg style="position:absolute;left:485px;top:637px;" width="48" height="60" viewBox="0 0 48 60"><rect x="0.5" y="0.5" width="47" height="59" fill="#f9f9f9" stroke="#a6a6a6"/><line x1="7" y1="11.5" x2="35.8" y2="11.5" stroke="#858585" stroke-width="1" stroke-dasharray="3 0.8 2.3 0.8 2.3 0.8 1.2 0.8 2.3 0.8 6 0.8 7 50"/><line x1="7" y1="14.5" x2="35" y2="14.5" stroke="#858585" stroke-width="1" stroke-dasharray="5 0.8 3.3 0.8 2.3 0.8 1.4 0.8 3.3 0.8 4.3 0.8 4.1 50"/><line x1="7" y1="17.5" x2="40.5" y2="17.5" stroke="#858585" stroke-width="1" stroke-dasharray="4.1 0.8 6.5 0.8 3.3 0.8 2.3 0.8 3.3 0.8 3.3 0.8 6.6 50"/><line x1="7" y1="20.5" x2="39.1" y2="20.5" stroke="#858585" stroke-width="1" stroke-dasharray="12 0.8 2.3 0.8 5.5 0.8 4.3 0.8 1.6 0.8 3 50"/><line x1="7" y1="23.5" x2="17.8" y2="23.5" stroke="#858585" stroke-width="1" stroke-dasharray="2 1 7.8 50"/><line x1="7" y1="28.5" x2="39.7" y2="28.5" stroke="#858585" stroke-width="1" stroke-dasharray="3 0.8 2.3 0.8 2.3 0.8 1.2 0.8 2.3 0.8 6 0.8 11 50"/><line x1="7" y1="31.5" x2="36.8" y2="31.5" stroke="#858585" stroke-width="1" stroke-dasharray="5 0.8 5.3 0.8 2.3 0.8 4.3 0.8 7.2 0.8 2.2 50"/><line x1="7" y1="34.5" x2="39.1" y2="34.5" stroke="#858585" stroke-width="1" stroke-dasharray="12 0.8 2.3 0.8 5.5 0.8 4.3 0.8 1.6 0.8 3 50"/><line x1="7" y1="37.5" x2="35" y2="37.5" stroke="#858585" stroke-width="1" stroke-dasharray="5 0.8 3.3 0.8 2.3 0.8 1.4 0.8 3.3 0.8 4.3 0.8 4.1 50"/><line x1="7" y1="42.5" x2="40.5" y2="42.5" stroke="#858585" stroke-width="1" stroke-dasharray="4.1 0.8 6.5 0.8 3.3 0.8 2.3 0.8 3.3 0.8 3.3 0.8 6.6 50"/><line x1="7" y1="45.5" x2="35" y2="45.5" stroke="#858585" stroke-width="1" stroke-dasharray="5 0.8 3.3 0.8 2.3 0.8 1.4 0.8 3.3 0.8 4.3 0.8 4.1 50"/><line x1="7" y1="48.5" x2="37.8" y2="48.5" stroke="#858585" stroke-width="1" stroke-dasharray="5 0.8 5.3 0.8 2.3 0.8 4.3 0.8 7.2 0.8 2.2 50"/><line x1="7" y1="51.5" x2="29.8" y2="51.5" stroke="#858585" stroke-width="1" stroke-dasharray="3 0.8 2.3 0.8 2.3 0.8 1.2 0.8 2.3 0.8 6 0.8 7 50"/></svg>
<div class="t" style="left:444.5px;width:130px;text-align:center;top:703.38px;font-size:13.33px;color:#3a3a3a;font-weight:normal;">.dmrc</div>
<svg style="position:absolute;left:617px;top:637px;" width="48" height="60" viewBox="0 0 48 60"><rect x="0.5" y="0.5" width="47" height="59" fill="#f9f9f9" stroke="#a6a6a6"/><line x1="7" y1="11.5" x2="35.8" y2="11.5" stroke="#858585" stroke-width="1" stroke-dasharray="3 0.8 2.3 0.8 2.3 0.8 1.2 0.8 2.3 0.8 6 0.8 7 50"/><line x1="7" y1="14.5" x2="35" y2="14.5" stroke="#858585" stroke-width="1" stroke-dasharray="5 0.8 3.3 0.8 2.3 0.8 1.4 0.8 3.3 0.8 4.3 0.8 4.1 50"/><line x1="7" y1="17.5" x2="40.5" y2="17.5" stroke="#858585" stroke-width="1" stroke-dasharray="4.1 0.8 6.5 0.8 3.3 0.8 2.3 0.8 3.3 0.8 3.3 0.8 6.6 50"/><line x1="7" y1="20.5" x2="39.1" y2="20.5" stroke="#858585" stroke-width="1" stroke-dasharray="12 0.8 2.3 0.8 5.5 0.8 4.3 0.8 1.6 0.8 3 50"/><line x1="7" y1="23.5" x2="17.8" y2="23.5" stroke="#858585" stroke-width="1" stroke-dasharray="2 1 7.8 50"/><line x1="7" y1="28.5" x2="39.7" y2="28.5" stroke="#858585" stroke-width="1" stroke-dasharray="3 0.8 2.3 0.8 2.3 0.8 1.2 0.8 2.3 0.8 6 0.8 11 50"/><line x1="7" y1="31.5" x2="36.8" y2="31.5" stroke="#858585" stroke-width="1" stroke-dasharray="5 0.8 5.3 0.8 2.3 0.8 4.3 0.8 7.2 0.8 2.2 50"/><line x1="7" y1="34.5" x2="39.1" y2="34.5" stroke="#858585" stroke-width="1" stroke-dasharray="12 0.8 2.3 0.8 5.5 0.8 4.3 0.8 1.6 0.8 3 50"/><line x1="7" y1="37.5" x2="35" y2="37.5" stroke="#858585" stroke-width="1" stroke-dasharray="5 0.8 3.3 0.8 2.3 0.8 1.4 0.8 3.3 0.8 4.3 0.8 4.1 50"/><line x1="7" y1="42.5" x2="40.5" y2="42.5" stroke="#858585" stroke-width="1" stroke-dasharray="4.1 0.8 6.5 0.8 3.3 0.8 2.3 0.8 3.3 0.8 3.3 0.8 6.6 50"/><line x1="7" y1="45.5" x2="35" y2="45.5" stroke="#858585" stroke-width="1" stroke-dasharray="5 0.8 3.3 0.8 2.3 0.8 1.4 0.8 3.3 0.8 4.3 0.8 4.1 50"/><line x1="7" y1="48.5" x2="37.8" y2="48.5" stroke="#858585" stroke-width="1" stroke-dasharray="5 0.8 5.3 0.8 2.3 0.8 4.3 0.8 7.2 0.8 2.2 50"/><line x1="7" y1="51.5" x2="29.8" y2="51.5" stroke="#858585" stroke-width="1" stroke-dasharray="3 0.8 2.3 0.8 2.3 0.8 1.2 0.8 2.3 0.8 6 0.8 7 50"/></svg>
<div class="t" style="left:576.5px;width:130px;text-align:center;top:703.38px;font-size:13.33px;color:#3a3a3a;font-weight:normal;">.gtkrc-2.0</div>
<svg style="position:absolute;left:749px;top:637px;" width="48" height="60" viewBox="0 0 48 60"><rect x="0.5" y="0.5" width="47" height="59" fill="#f9f9f9" stroke="#a6a6a6"/><line x1="7" y1="11.5" x2="35.8" y2="11.5" stroke="#858585" stroke-width="1" stroke-dasharray="3 0.8 2.3 0.8 2.3 0.8 1.2 0.8 2.3 0.8 6 0.8 7 50"/><line x1="7" y1="14.5" x2="35" y2="14.5" stroke="#858585" stroke-width="1" stroke-dasharray="5 0.8 3.3 0.8 2.3 0.8 1.4 0.8 3.3 0.8 4.3 0.8 4.1 50"/><line x1="7" y1="17.5" x2="40.5" y2="17.5" stroke="#858585" stroke-width="1" stroke-dasharray="4.1 0.8 6.5 0.8 3.3 0.8 2.3 0.8 3.3 0.8 3.3 0.8 6.6 50"/><line x1="7" y1="20.5" x2="39.1" y2="20.5" stroke="#858585" stroke-width="1" stroke-dasharray="12 0.8 2.3 0.8 5.5 0.8 4.3 0.8 1.6 0.8 3 50"/><line x1="7" y1="23.5" x2="17.8" y2="23.5" stroke="#858585" stroke-width="1" stroke-dasharray="2 1 7.8 50"/><line x1="7" y1="28.5" x2="39.7" y2="28.5" stroke="#858585" stroke-width="1" stroke-dasharray="3 0.8 2.3 0.8 2.3 0.8 1.2 0.8 2.3 0.8 6 0.8 11 50"/><line x1="7" y1="31.5" x2="36.8" y2="31.5" stroke="#858585" stroke-width="1" stroke-dasharray="5 0.8 5.3 0.8 2.3 0.8 4.3 0.8 7.2 0.8 2.2 50"/><line x1="7" y1="34.5" x2="39.1" y2="34.5" stroke="#858585" stroke-width="1" stroke-dasharray="12 0.8 2.3 0.8 5.5 0.8 4.3 0.8 1.6 0.8 3 50"/><line x1="7" y1="37.5" x2="35" y2="37.5" stroke="#858585" stroke-width="1" stroke-dasharray="5 0.8 3.3 0.8 2.3 0.8 1.4 0.8 3.3 0.8 4.3 0.8 4.1 50"/><line x1="7" y1="42.5" x2="40.5" y2="42.5" stroke="#858585" stroke-width="1" stroke-dasharray="4.1 0.8 6.5 0.8 3.3 0.8 2.3 0.8 3.3 0.8 3.3 0.8 6.6 50"/><line x1="7" y1="45.5" x2="35" y2="45.5" stroke="#858585" stroke-width="1" stroke-dasharray="5 0.8 3.3 0.8 2.3 0.8 1.4 0.8 3.3 0.8 4.3 0.8 4.1 50"/><line x1="7" y1="48.5" x2="37.8" y2="48.5" stroke="#858585" stroke-width="1" stroke-dasharray="5 0.8 5.3 0.8 2.3 0.8 4.3 0.8 7.2 0.8 2.2 50"/><line x1="7" y1="51.5" x2="29.8" y2="51.5" stroke="#858585" stroke-width="1" stroke-dasharray="3 0.8 2.3 0.8 2.3 0.8 1.2 0.8 2.3 0.8 6 0.8 7 50"/></svg>
<div class="t" style="left:708.5px;width:130px;text-align:center;top:703.38px;font-size:13.33px;color:#3a3a3a;font-weight:normal;">.gtkrc-xfce</div>
<svg style="position:absolute;left:353px;top:763px;" width="48" height="60" viewBox="0 0 48 60"><rect x="0.5" y="0.5" width="47" height="59" fill="#f9f9f9" stroke="#a6a6a6"/><line x1="7" y1="11.5" x2="35.8" y2="11.5" stroke="#858585" stroke-width="1" stroke-dasharray="3 0.8 2.3 0.8 2.3 0.8 1.2 0.8 2.3 0.8 6 0.8 7 50"/><line x1="7" y1="14.5" x2="35" y2="14.5" stroke="#858585" stroke-width="1" stroke-dasharray="5 0.8 3.3 0.8 2.3 0.8 1.4 0.8 3.3 0.8 4.3 0.8 4.1 50"/><line x1="7" y1="17.5" x2="40.5" y2="17.5" stroke="#858585" stroke-width="1" stroke-dasharray="4.1 0.8 6.5 0.8 3.3 0.8 2.3 0.8 3.3 0.8 3.3 0.8 6.6 50"/><line x1="7" y1="20.5" x2="39.1" y2="20.5" stroke="#858585" stroke-width="1" stroke-dasharray="12 0.8 2.3 0.8 5.5 0.8 4.3 0.8 1.6 0.8 3 50"/><line x1="7" y1="23.5" x2="17.8" y2="23.5" stroke="#858585" stroke-width="1" stroke-dasharray="2 1 7.8 50"/><line x1="7" y1="28.5" x2="39.7" y2="28.5" stroke="#858585" stroke-width="1" stroke-dasharray="3 0.8 2.3 0.8 2.3 0.8 1.2 0.8 2.3 0.8 6 0.8 11 50"/><line x1="7" y1="31.5" x2="36.8" y2="31.5" stroke="#858585" stroke-width="1" stroke-dasharray="5 0.8 5.3 0.8 2.3 0.8 4.3 0.8 7.2 0.8 2.2 50"/><line x1="7" y1="34.5" x2="39.1" y2="34.5" stroke="#858585" stroke-width="1" stroke-dasharray="12 0.8 2.3 0.8 5.5 0.8 4.3 0.8 1.6 0.8 3 50"/><line x1="7" y1="37.5" x2="35" y2="37.5" stroke="#858585" stroke-width="1" stroke-dasharray="5 0.8 3.3 0.8 2.3 0.8 1.4 0.8 3.3 0.8 4.3 0.8 4.1 50"/><line x1="7" y1="42.5" x2="40.5" y2="42.5" stroke="#858585" stroke-width="1" stroke-dasharray="4.1 0.8 6.5 0.8 3.3 0.8 2.3 0.8 3.3 0.8 3.3 0.8 6.6 50"/><line x1="7" y1="45.5" x2="35" y2="45.5" stroke="#858585" stroke-width="1" stroke-dasharray="5 0.8 3.3 0.8 2.3 0.8 1.4 0.8 3.3 0.8 4.3 0.8 4.1 50"/><line x1="7" y1="48.5" x2="37.8" y2="48.5" stroke="#858585" stroke-width="1" stroke-dasharray="5 0.8 5.3 0.8 2.3 0.8 4.3 0.8 7.2 0.8 2.2 50"/><line x1="7" y1="51.5" x2="29.8" y2="51.5" stroke="#858585" stroke-width="1" stroke-dasharray="3 0.8 2.3 0.8 2.3 0.8 1.2 0.8 2.3 0.8 6 0.8 7 50"/></svg>
<svg style="position:absolute;left:749px;top:763px;" width="48" height="60" viewBox="0 0 48 60"><rect x="0.5" y="0.5" width="47" height="59" fill="#f9f9f9" stroke="#a6a6a6"/><line x1="7" y1="11.5" x2="35.8" y2="11.5" stroke="#858585" stroke-width="1" stroke-dasharray="3 0.8 2.3 0.8 2.3 0.8 1.2 0.8 2.3 0.8 6 0.8 7 50"/><line x1="7" y1="14.5" x2="35" y2="14.5" stroke="#858585" stroke-width="1" stroke-dasharray="5 0.8 3.3 0.8 2.3 0.8 1.4 0.8 3.3 0.8 4.3 0.8 4.1 50"/><line x1="7" y1="17.5" x2="40.5" y2="17.5" stroke="#858585" stroke-width="1" stroke-dasharray="4.1 0.8 6.5 0.8 3.3 0.8 2.3 0.8 3.3 0.8 3.3 0.8 6.6 50"/><line x1="7" y1="20.5" x2="39.1" y2="20.5" stroke="#858585" stroke-width="1" stroke-dasharray="12 0.8 2.3 0.8 5.5 0.8 4.3 0.8 1.6 0.8 3 50"/><line x1="7" y1="23.5" x2="17.8" y2="23.5" stroke="#858585" stroke-width="1" stroke-dasharray="2 1 7.8 50"/><line x1="7" y1="28.5" x2="39.7" y2="28.5" stroke="#858585" stroke-width="1" stroke-dasharray="3 0.8 2.3 0.8 2.3 0.8 1.2 0.8 2.3 0.8 6 0.8 11 50"/><line x1="7" y1="31.5" x2="36.8" y2="31.5" stroke="#858585" stroke-width="1" stroke-dasharray="5 0.8 5.3 0.8 2.3 0.8 4.3 0.8 7.2 0.8 2.2 50"/><line x1="7" y1="34.5" x2="39.1" y2="34.5" stroke="#858585" stroke-width="1" stroke-dasharray="12 0.8 2.3 0.8 5.5 0.8 4.3 0.8 1.6 0.8 3 50"/><line x1="7" y1="37.5" x2="35" y2="37.5" stroke="#858585" stroke-width="1" stroke-dasharray="5 0.8 3.3 0.8 2.3 0.8 1.4 0.8 3.3 0.8 4.3 0.8 4.1 50"/><line x1="7" y1="42.5" x2="40.5" y2="42.5" stroke="#858585" stroke-width="1" stroke-dasharray="4.1 0.8 6.5 0.8 3.3 0.8 2.3 0.8 3.3 0.8 3.3 0.8 6.6 50"/><line x1="7" y1="45.5" x2="35" y2="45.5" stroke="#858585" stroke-width="1" stroke-dasharray="5 0.8 3.3 0.8 2.3 0.8 1.4 0.8 3.3 0.8 4.3 0.8 4.1 50"/><line x1="7" y1="48.5" x2="37.8" y2="48.5" stroke="#858585" stroke-width="1" stroke-dasharray="5 0.8 5.3 0.8 2.3 0.8 4.3 0.8 7.2 0.8 2.2 50"/><line x1="7" y1="51.5" x2="29.8" y2="51.5" stroke="#858585" stroke-width="1" stroke-dasharray="3 0.8 2.3 0.8 2.3 0.8 1.2 0.8 2.3 0.8 6 0.8 7 50"/></svg>
<svg style="position:absolute;left:881px;top:138px;" width="56" height="53" viewBox="0 0 56 53"><rect x="0" y="0.5" width="56" height="52" rx="3" fill="#d9cdb8"/><rect x="0" y="0" width="56" height="52" rx="3" fill="#e1a94f"/><path d="M3 0H53Q56 0 56 3V45H0V3Q0 0 3 0Z" fill="#f7c46f"/></svg>
<div class="t" style="left:844.5px;width:130px;text-align:center;top:199.38px;font-size:13.33px;color:#3a3a3a;font-weight:normal;">Desktop</div>
<svg style="position:absolute;left:1011px;top:140px;" width="56" height="50" viewBox="0 0 56 50"><path d="M3 0H20.5L27 6H53Q56 6 56 9V30H0V3Q0 0 3 0Z" fill="#e1a94f"/><rect x="4" y="9" width="48" height="14" rx="2" fill="#e3e3e3"/><rect x="0" y="14.5" width="56" height="35" rx="3" fill="#d9cdb8"/><rect x="0" y="14" width="56" height="35" rx="3" fill="#f7c46f"/><path d="M21 20H30L36.5 26.5V40H21Z" fill="#534f48"/><path d="M30 21.5V26.5H35Z" fill="#f7c46f"/></svg>
<div class="t" style="left:974.5px;width:130px;text-align:center;top:199.38px;font-size:13.33px;color:#3a3a3a;font-weight:normal;">Documents</div>
<svg style="position:absolute;left:1141px;top:140px;" width="56" height="50" viewBox="0 0 56 50"><path d="M3 0H20.5L27 6H53Q56 6 56 9V30H0V3Q0 0 3 0Z" fill="#e1a94f"/><rect x="4" y="9" width="48" height="14" rx="2" fill="#e3e3e3"/><rect x="0" y="14.5" width="56" height="35" rx="3" fill="#d9cdb8"/><rect x="0" y="14" width="56" height="35" rx="3" fill="#f7c46f"/><rect x="26.3" y="20.4" width="5.3" height="12.5" fill="#534f48"/><path d="M20.7 32H37.5L29.1 40.4Z" fill="#534f48"/></svg>
<div class="t" style="left:1104.5px;width:130px;text-align:center;top:199.38px;font-size:13.33px;color:#3a3a3a;font-weight:normal;">Downloads</div>
<svg style="position:absolute;left:1271px;top:140px;" width="56" height="50" viewBox="0 0 56 50"><path d="M3 0H20.5L27 6H53Q56 6 56 9V30H0V3Q0 0 3 0Z" fill="#e1a94f"/><rect x="4" y="9" width="48" height="14" rx="2" fill="#e3e3e3"/><rect x="0" y="14.5" width="56" height="35" rx="3" fill="#d9cdb8"/><rect x="0" y="14" width="56" height="35" rx="3" fill="#f7c46f"/><rect x="25.2" y="22.5" width="13.6" height="4" fill="#534f48"/><rect x="25.2" y="22.5" width="2" height="16.5" fill="#534f48"/><rect x="36.8" y="22.5" width="2" height="15" fill="#534f48"/><ellipse cx="22.6" cy="39.2" rx="3.6" ry="2.8" fill="#534f48"/><ellipse cx="34.6" cy="37.6" rx="3.6" ry="2.8" fill="#534f48"/></svg>
<div class="t" style="left:1234.5px;width:130px;text-align:center;top:199.38px;font-size:13.33px;color:#3a3a3a;font-weight:normal;">Music</div>
<svg style="position:absolute;left:881px;top:266px;" width="56" height="50" viewBox="0 0 56 50"><path d="M3 0H20.5L27 6H53Q56 6 56 9V30H0V3Q0 0 3 0Z" fill="#e1a94f"/><rect x="4" y="9" width="48" height="14" rx="2" fill="#e3e3e3"/><rect x="0" y="14.5" width="56" height="35" rx="3" fill="#d9cdb8"/><rect x="0" y="14" width="56" height="35" rx="3" fill="#f7c46f"/><path d="M22.3 25V23Q22.3 21 24.3 21H32.8Q34.8 21 34.8 23V25H40Q41.2 25 41.2 26.2V40.3Q41.2 41.5 40 41.5H17Q15.8 41.5 15.8 40.3V26.2Q15.8 25 17 25Z" fill="#534f48"/><circle cx="28.6" cy="32.6" r="5.4" fill="#f7c46f"/></svg>
<div class="t" style="left:844.5px;width:130px;text-align:center;top:325.38px;font-size:13.33px;color:#3a3a3a;font-weight:normal;">Pictures</div>
<svg style="position:absolute;left:1011px;top:266px;" width="56" height="50" viewBox="0 0 56 50"><path d="M3 0H20.5L27 6H53Q56 6 56 9V30H0V3Q0 0 3 0Z" fill="#e1a94f"/><rect x="4" y="9" width="48" height="14" rx="2" fill="#e3e3e3"/><rect x="0" y="14.5" width="56" height="35" rx="3" fill="#d9cdb8"/><rect x="0" y="14" width="56" height="35" rx="3" fill="#f7c46f"/><path d="M35 25.8L22.1 32.4L34.6 38.7" stroke="#534f48" stroke-width="2.2" fill="none"/><circle cx="35" cy="25.8" r="3.4" fill="#534f48"/><circle cx="22.1" cy="32.4" r="3.4" fill="#534f48"/><circle cx="34.6" cy="38.7" r="3.4" fill="#534f48"/></svg>
<div class="t" style="left:974.5px;width:130px;text-align:center;top:325.38px;font-size:13.33px;color:#3a3a3a;font-weight:normal;">Public</div>
<svg style="position:absolute;left:1141px;top:266px;" width="56" height="50" viewBox="0 0 56 50"><path d="M3 0H20.5L27 6H53Q56 6 56 9V30H0V3Q0 0 3 0Z" fill="#e1a94f"/><rect x="4" y="9" width="48" height="14" rx="2" fill="#e3e3e3"/><rect x="0" y="14.5" width="56" height="35" rx="3" fill="#d9cdb8"/><rect x="0" y="14" width="56" height="35" rx="3" fill="#f7c46f"/><path d="M21 22.6H30.4L36.4 28.6V36H21Z" fill="#534f48"/><path d="M30.4 23.8V28.6H35.2Z" fill="#f7c46f"/><rect x="21" y="36" width="15.4" height="6.8" fill="url(#hatch)"/></svg>
<div class="t" style="left:1104.5px;width:130px;text-align:center;top:325.38px;font-size:13.33px;color:#3a3a3a;font-weight:normal;">Templates</div>
<svg style="position:absolute;left:1271px;top:266px;" width="56" height="50" viewBox="0 0 56 50"><path d="M3 0H20.5L27 6H53Q56 6 56 9V30H0V3Q0 0 3 0Z" fill="#e1a94f"/><rect x="4" y="9" width="48" height="14" rx="2" fill="#e3e3e3"/><rect x="0" y="14.5" width="56" height="35" rx="3" fill="#d9cdb8"/><rect x="0" y="14" width="56" height="35" rx="3" fill="#f7c46f"/><rect x="20.6" y="22.3" width="16.4" height="19.9" fill="#534f48"/><rect x="24.1" y="23.8" width="9.2" height="7.2" fill="#f7c46f"/><rect x="24.1" y="32.6" width="9.2" height="8.1" fill="#f7c46f"/><rect x="21.6" y="24.0" width="1.5" height="1.6" fill="#f7c46f"/><rect x="34.5" y="24.0" width="1.5" height="1.6" fill="#f7c46f"/><rect x="21.6" y="27.4" width="1.5" height="1.6" fill="#f7c46f"/><rect x="34.5" y="27.4" width="1.5" height="1.6" fill="#f7c46f"/><rect x="21.6" y="30.8" width="1.5" height="1.6" fill="#f7c46f"/><rect x="34.5" y="30.8" width="1.5" height="1.6" fill="#f7c46f"/><rect x="21.6" y="34.2" width="1.5" height="1.6" fill="#f7c46f"/><rect x="34.5" y="34.2" width="1.5" height="1.6" fill="#f7c46f"/><rect x="21.6" y="37.6" width="1.5" height="1.6" fill="#f7c46f"/><rect x="34.5" y="37.6" width="1.5" height="1.6" fill="#f7c46f"/></svg>
<div class="t" style="left:1234.5px;width:130px;text-align:center;top:325.38px;font-size:13.33px;color:#3a3a3a;font-weight:normal;">Videos</div>
<svg style="position:absolute;left:881px;top:392px;" width="56" height="50" viewBox="0 0 56 50"><path d="M3 0H20.5L27 6H53Q56 6 56 9V30H0V3Q0 0 3 0Z" fill="#e1a94f"/><rect x="4" y="9" width="48" height="14" rx="2" fill="#e3e3e3"/><rect x="0" y="14.5" width="56" height="35" rx="3" fill="#d9cdb8"/><rect x="0" y="14" width="56" height="35" rx="3" fill="#f7c46f"/></svg>
<div class="t" style="left:844.5px;width:130px;text-align:center;top:451.38px;font-size:13.33px;color:#3a3a3a;font-weight:normal;">.cache</div>
<svg style="position:absolute;left:1011px;top:392px;" width="56" height="50" viewBox="0 0 56 50"><path d="M3 0H20.5L27 6H53Q56 6 56 9V30H0V3Q0 0 3 0Z" fill="#e1a94f"/><rect x="4" y="9" width="48" height="14" rx="2" fill="#e3e3e3"/><rect x="0" y="14.5" width="56" height="35" rx="3" fill="#d9cdb8"/><rect x="0" y="14" width="56" height="35" rx="3" fill="#f7c46f"/></svg>
<div class="t" style="left:974.5px;width:130px;text-align:center;top:451.38px;font-size:13.33px;color:#3a3a3a;font-weight:normal;">.config</div>
<svg style="position:absolute;left:1141px;top:392px;" width="56" height="50" viewBox="0 0 56 50"><path d="M3 0H20.5L27 6H53Q56 6 56 9V30H0V3Q0 0 3 0Z" fill="#e1a94f"/><rect x="4" y="9" width="48" height="14" rx="2" fill="#e3e3e3"/><rect x="0" y="14.5" width="56" height="35" rx="3" fill="#d9cdb8"/><rect x="0" y="14" width="56" height="35" rx="3" fill="#f7c46f"/></svg>
<div class="t" style="left:1104.5px;width:130px;text-align:center;top:451.38px;font-size:13.33px;color:#3a3a3a;font-weight:normal;">.icons</div>
<svg style="position:absolute;left:1271px;top:392px;" width="56" height="50" viewBox="0 0 56 50"><path d="M3 0H20.5L27 6H53Q56 6 56 9V30H0V3Q0 0 3 0Z" fill="#e1a94f"/><rect x="4" y="9" width="48" height="14" rx="2" fill="#e3e3e3"/><rect x="0" y="14.5" width="56" height="35" rx="3" fill="#d9cdb8"/><rect x="0" y="14" width="56" height="35" rx="3" fill="#f7c46f"/></svg>
<div class="t" style="left:1234.5px;width:130px;text-align:center;top:451.38px;font-size:13.33px;color:#3a3a3a;font-weight:normal;">.linuxmint</div>
<svg style="position:absolute;left:881px;top:518px;" width="56" height="50" viewBox="0 0 56 50"><path d="M3 0H20.5L27 6H53Q56 6 56 9V30H0V3Q0 0 3 0Z" fill="#e1a94f"/><rect x="4" y="9" width="48" height="14" rx="2" fill="#e3e3e3"/><rect x="0" y="14.5" width="56" height="35" rx="3" fill="#d9cdb8"/><rect x="0" y="14" width="56" height="35" rx="3" fill="#f7c46f"/></svg>
<div class="t" style="left:844.5px;width:130px;text-align:center;top:577.38px;font-size:13.33px;color:#3a3a3a;font-weight:normal;">.local</div>
<svg style="position:absolute;left:1011px;top:518px;" width="56" height="50" viewBox="0 0 56 50"><path d="M3 0H20.5L27 6H53Q56 6 56 9V30H0V3Q0 0 3 0Z" fill="#e1a94f"/><rect x="4" y="9" width="48" height="14" rx="2" fill="#e3e3e3"/><rect x="0" y="14.5" width="56" height="35" rx="3" fill="#d9cdb8"/><rect x="0" y="14" width="56" height="35" rx="3" fill="#f7c46f"/></svg>
<div class="t" style="left:974.5px;width:130px;text-align:center;top:577.38px;font-size:13.33px;color:#3a3a3a;font-weight:normal;">.mozilla</div>
<svg style="position:absolute;left:1141px;top:518px;" width="56" height="50" viewBox="0 0 56 50"><path d="M3 0H20.5L27 6H53Q56 6 56 9V30H0V3Q0 0 3 0Z" fill="#e1a94f"/><rect x="4" y="9" width="48" height="14" rx="2" fill="#e3e3e3"/><rect x="0" y="14.5" width="56" height="35" rx="3" fill="#d9cdb8"/><rect x="0" y="14" width="56" height="35" rx="3" fill="#f7c46f"/></svg>
<div class="t" style="left:1104.5px;width:130px;text-align:center;top:577.38px;font-size:13.33px;color:#3a3a3a;font-weight:normal;">.themes</div>
<svg style="position:absolute;left:1275px;top:511px;" width="48" height="60" viewBox="0 0 48 60"><rect x="0.5" y="0.5" width="47" height="59" fill="#f9f9f9" stroke="#a6a6a6"/><line x1="7" y1="11.5" x2="35.8" y2="11.5" stroke="#858585" stroke-width="1" stroke-dasharray="3 0.8 2.3 0.8 2.3 0.8 1.2 0.8 2.3 0.8 6 0.8 7 50"/><line x1="7" y1="14.5" x2="35" y2="14.5" stroke="#858585" stroke-width="1" stroke-dasharray="5 0.8 3.3 0.8 2.3 0.8 1.4 0.8 3.3 0.8 4.3 0.8 4.1 50"/><line x1="7" y1="17.5" x2="40.5" y2="17.5" stroke="#858585" stroke-width="1" stroke-dasharray="4.1 0.8 6.5 0.8 3.3 0.8 2.3 0.8 3.3 0.8 3.3 0.8 6.6 50"/><line x1="7" y1="20.5" x2="39.1" y2="20.5" stroke="#858585" stroke-width="1" stroke-dasharray="12 0.8 2.3 0.8 5.5 0.8 4.3 0.8 1.6 0.8 3 50"/><line x1="7" y1="23.5" x2="17.8" y2="23.5" stroke="#858585" stroke-width="1" stroke-dasharray="2 1 7.8 50"/><line x1="7" y1="28.5" x2="39.7" y2="28.5" stroke="#858585" stroke-width="1" stroke-dasharray="3 0.8 2.3 0.8 2.3 0.8 1.2 0.8 2.3 0.8 6 0.8 11 50"/><line x1="7" y1="31.5" x2="36.8" y2="31.5" stroke="#858585" stroke-width="1" stroke-dasharray="5 0.8 5.3 0.8 2.3 0.8 4.3 0.8 7.2 0.8 2.2 50"/><line x1="7" y1="34.5" x2="39.1" y2="34.5" stroke="#858585" stroke-width="1" stroke-dasharray="12 0.8 2.3 0.8 5.5 0.8 4.3 0.8 1.6 0.8 3 50"/><line x1="7" y1="37.5" x2="35" y2="37.5" stroke="#858585" stroke-width="1" stroke-dasharray="5 0.8 3.3 0.8 2.3 0.8 1.4 0.8 3.3 0.8 4.3 0.8 4.1 50"/><line x1="7" y1="42.5" x2="40.5" y2="42.5" stroke="#858585" stroke-width="1" stroke-dasharray="4.1 0.8 6.5 0.8 3.3 0.8 2.3 0.8 3.3 0.8 3.3 0.8 6.6 50"/><line x1="7" y1="45.5" x2="35" y2="45.5" stroke="#858585" stroke-width="1" stroke-dasharray="5 0.8 3.3 0.8 2.3 0.8 1.4 0.8 3.3 0.8 4.3 0.8 4.1 50"/><line x1="7" y1="48.5" x2="37.8" y2="48.5" stroke="#858585" stroke-width="1" stroke-dasharray="5 0.8 5.3 0.8 2.3 0.8 4.3 0.8 7.2 0.8 2.2 50"/><line x1="7" y1="51.5" x2="29.8" y2="51.5" stroke="#858585" stroke-width="1" stroke-dasharray="3 0.8 2.3 0.8 2.3 0.8 1.2 0.8 2.3 0.8 6 0.8 7 50"/></svg>
<div class="t" style="left:1234.5px;width:130px;text-align:center;top:577.38px;font-size:13.33px;color:#3a3a3a;font-weight:normal;">.bash_logout</div>
<svg style="position:absolute;left:885px;top:637px;" width="48" height="60" viewBox="0 0 48 60"><rect x="0.5" y="0.5" width="47" height="59" fill="#f9f9f9" stroke="#a6a6a6"/><line x1="7" y1="11.5" x2="35.8" y2="11.5" stroke="#858585" stroke-width="1" stroke-dasharray="3 0.8 2.3 0.8 2.3 0.8 1.2 0.8 2.3 0.8 6 0.8 7 50"/><line x1="7" y1="14.5" x2="35" y2="14.5" stroke="#858585" stroke-width="1" stroke-dasharray="5 0.8 3.3 0.8 2.3 0.8 1.4 0.8 3.3 0.8 4.3 0.8 4.1 50"/><line x1="7" y1="17.5" x2="40.5" y2="17.5" stroke="#858585" stroke-width="1" stroke-dasharray="4.1 0.8 6.5 0.8 3.3 0.8 2.3 0.8 3.3 0.8 3.3 0.8 6.6 50"/><line x1="7" y1="20.5" x2="39.1" y2="20.5" stroke="#858585" stroke-width="1" stroke-dasharray="12 0.8 2.3 0.8 5.5 0.8 4.3 0.8 1.6 0.8 3 50"/><line x1="7" y1="23.5" x2="17.8" y2="23.5" stroke="#858585" stroke-width="1" stroke-dasharray="2 1 7.8 50"/><line x1="7" y1="28.5" x2="39.7" y2="28.5" stroke="#858585" stroke-width="1" stroke-dasharray="3 0.8 2.3 0.8 2.3 0.8 1.2 0.8 2.3 0.8 6 0.8 11 50"/><line x1="7" y1="31.5" x2="36.8" y2="31.5" stroke="#858585" stroke-width="1" stroke-dasharray="5 0.8 5.3 0.8 2.3 0.8 4.3 0.8 7.2 0.8 2.2 50"/><line x1="7" y1="34.5" x2="39.1" y2="34.5" stroke="#858585" stroke-width="1" stroke-dasharray="12 0.8 2.3 0.8 5.5 0.8 4.3 0.8 1.6 0.8 3 50"/><line x1="7" y1="37.5" x2="35" y2="37.5" stroke="#858585" stroke-width="1" stroke-dasharray="5 0.8 3.3 0.8 2.3 0.8 1.4 0.8 3.3 0.8 4.3 0.8 4.1 50"/><line x1="7" y1="42.5" x2="40.5" y2="42.5" stroke="#858585" stroke-width="1" stroke-dasharray="4.1 0.8 6.5 0.8 3.3 0.8 2.3 0.8 3.3 0.8 3.3 0.8 6.6 50"/><line x1="7" y1="45.5" x2="35" y2="45.5" stroke="#858585" stroke-width="1" stroke-dasharray="5 0.8 3.3 0.8 2.3 0.8 1.4 0.8 3.3 0.8 4.3 0.8 4.1 50"/><line x1="7" y1="48.5" x2="37.8" y2="48.5" stroke="#858585" stroke-width="1" stroke-dasharray="5 0.8 5.3 0.8 2.3 0.8 4.3 0.8 7.2 0.8 2.2 50"/><line x1="7" y1="51.5" x2="29.8" y2="51.5" stroke="#858585" stroke-width="1" stroke-dasharray="3 0.8 2.3 0.8 2.3 0.8 1.2 0.8 2.3 0.8 6 0.8 7 50"/></svg>
<div class="t" style="left:844.5px;width:130px;text-align:center;top:703.38px;font-size:13.33px;color:#3a3a3a;font-weight:normal;">.bashrc</div>
<svg style="position:absolute;left:1015px;top:637px;" width="48" height="60" viewBox="0 0 48 60"><rect x="0.5" y="0.5" width="47" height="59" fill="#f9f9f9" stroke="#a6a6a6"/><line x1="7" y1="11.5" x2="35.8" y2="11.5" stroke="#858585" stroke-width="1" stroke-dasharray="3 0.8 2.3 0.8 2.3 0.8 1.2 0.8 2.3 0.8 6 0.8 7 50"/><line x1="7" y1="14.5" x2="35" y2="14.5" stroke="#858585" stroke-width="1" stroke-dasharray="5 0.8 3.3 0.8 2.3 0.8 1.4 0.8 3.3 0.8 4.3 0.8 4.1 50"/><line x1="7" y1="17.5" x2="40.5" y2="17.5" stroke="#858585" stroke-width="1" stroke-dasharray="4.1 0.8 6.5 0.8 3.3 0.8 2.3 0.8 3.3 0.8 3.3 0.8 6.6 50"/><line x1="7" y1="20.5" x2="39.1" y2="20.5" stroke="#858585" stroke-width="1" stroke-dasharray="12 0.8 2.3 0.8 5.5 0.8 4.3 0.8 1.6 0.8 3 50"/><line x1="7" y1="23.5" x2="17.8" y2="23.5" stroke="#858585" stroke-width="1" stroke-dasharray="2 1 7.8 50"/><line x1="7" y1="28.5" x2="39.7" y2="28.5" stroke="#858585" stroke-width="1" stroke-dasharray="3 0.8 2.3 0.8 2.3 0.8 1.2 0.8 2.3 0.8 6 0.8 11 50"/><line x1="7" y1="31.5" x2="36.8" y2="31.5" stroke="#858585" stroke-width="1" stroke-dasharray="5 0.8 5.3 0.8 2.3 0.8 4.3 0.8 7.2 0.8 2.2 50"/><line x1="7" y1="34.5" x2="39.1" y2="34.5" stroke="#858585" stroke-width="1" stroke-dasharray="12 0.8 2.3 0.8 5.5 0.8 4.3 0.8 1.6 0.8 3 50"/><line x1="7" y1="37.5" x2="35" y2="37.5" stroke="#858585" stroke-width="1" stroke-dasharray="5 0.8 3.3 0.8 2.3 0.8 1.4 0.8 3.3 0.8 4.3 0.8 4.1 50"/><line x1="7" y1="42.5" x2="40.5" y2="42.5" stroke="#858585" stroke-width="1" stroke-dasharray="4.1 0.8 6.5 0.8 3.3 0.8 2.3 0.8 3.3 0.8 3.3 0.8 6.6 50"/><line x1="7" y1="45.5" x2="35" y2="45.5" stroke="#858585" stroke-width="1" stroke-dasharray="5 0.8 3.3 0.8 2.3 0.8 1.4 0.8 3.3 0.8 4.3 0.8 4.1 50"/><line x1="7" y1="48.5" x2="37.8" y2="48.5" stroke="#858585" stroke-width="1" stroke-dasharray="5 0.8 5.3 0.8 2.3 0.8 4.3 0.8 7.2 0.8 2.2 50"/><line x1="7" y1="51.5" x2="29.8" y2="51.5" stroke="#858585" stroke-width="1" stroke-dasharray="3 0.8 2.3 0.8 2.3 0.8 1.2 0.8 2.3 0.8 6 0.8 7 50"/></svg>
<div class="t" style="left:974.5px;width:130px;text-align:center;top:703.38px;font-size:13.33px;color:#3a3a3a;font-weight:normal;">.dmrc</div>
<svg style="position:absolute;left:1145px;top:637px;" width="48" height="60" viewBox="0 0 48 60"><rect x="0.5" y="0.5" width="47" height="59" fill="#f9f9f9" stroke="#a6a6a6"/><line x1="7" y1="11.5" x2="35.8" y2="11.5" stroke="#858585" stroke-width="1" stroke-dasharray="3 0.8 2.3 0.8 2.3 0.8 1.2 0.8 2.3 0.8 6 0.8 7 50"/><line x1="7" y1="14.5" x2="35" y2="14.5" stroke="#858585" stroke-width="1" stroke-dasharray="5 0.8 3.3 0.8 2.3 0.8 1.4 0.8 3.3 0.8 4.3 0.8 4.1 50"/><line x1="7" y1="17.5" x2="40.5" y2="17.5" stroke="#858585" stroke-width="1" stroke-dasharray="4.1 0.8 6.5 0.8 3.3 0.8 2.3 0.8 3.3 0.8 3.3 0.8 6.6 50"/><line x1="7" y1="20.5" x2="39.1" y2="20.5" stroke="#858585" stroke-width="1" stroke-dasharray="12 0.8 2.3 0.8 5.5 0.8 4.3 0.8 1.6 0.8 3 50"/><line x1="7" y1="23.5" x2="17.8" y2="23.5" stroke="#858585" stroke-width="1" stroke-dasharray="2 1 7.8 50"/><line x1="7" y1="28.5" x2="39.7" y2="28.5" stroke="#858585" stroke-width="1" stroke-dasharray="3 0.8 2.3 0.8 2.3 0.8 1.2 0.8 2.3 0.8 6 0.8 11 50"/><line x1="7" y1="31.5" x2="36.8" y2="31.5" stroke="#858585" stroke-width="1" stroke-dasharray="5 0.8 5.3 0.8 2.3 0.8 4.3 0.8 7.2 0.8 2.2 50"/><line x1="7" y1="34.5" x2="39.1" y2="34.5" stroke="#858585" stroke-width="1" stroke-dasharray="12 0.8 2.3 0.8 5.5 0.8 4.3 0.8 1.6 0.8 3 50"/><line x1="7" y1="37.5" x2="35" y2="37.5" stroke="#858585" stroke-width="1" stroke-dasharray="5 0.8 3.3 0.8 2.3 0.8 1.4 0.8 3.3 0.8 4.3 0.8 4.1 50"/><line x1="7" y1="42.5" x2="40.5" y2="42.5" stroke="#858585" stroke-width="1" stroke-dasharray="4.1 0.8 6.5 0.8 3.3 0.8 2.3 0.8 3.3 0.8 3.3 0.8 6.6 50"/><line x1="7" y1="45.5" x2="35" y2="45.5" stroke="#858585" stroke-width="1" stroke-dasharray="5 0.8 3.3 0.8 2.3 0.8 1.4 0.8 3.3 0.8 4.3 0.8 4.1 50"/><line x1="7" y1="48.5" x2="37.8" y2="48.5" stroke="#858585" stroke-width="1" stroke-dasharray="5 0.8 5.3 0.8 2.3 0.8 4.3 0.8 7.2 0.8 2.2 50"/><line x1="7" y1="51.5" x2="29.8" y2="51.5" stroke="#858585" stroke-width="1" stroke-dasharray="3 0.8 2.3 0.8 2.3 0.8 1.2 0.8 2.3 0.8 6 0.8 7 50"/></svg>
<div class="t" style="left:1104.5px;width:130px;text-align:center;top:703.38px;font-size:13.33px;color:#3a3a3a;font-weight:normal;">.gtkrc-2.0</div>
<svg style="position:absolute;left:1275px;top:637px;" width="48" height="60" viewBox="0 0 48 60"><rect x="0.5" y="0.5" width="47" height="59" fill="#f9f9f9" stroke="#a6a6a6"/><line x1="7" y1="11.5" x2="35.8" y2="11.5" stroke="#858585" stroke-width="1" stroke-dasharray="3 0.8 2.3 0.8 2.3 0.8 1.2 0.8 2.3 0.8 6 0.8 7 50"/><line x1="7" y1="14.5" x2="35" y2="14.5" stroke="#858585" stroke-width="1" stroke-dasharray="5 0.8 3.3 0.8 2.3 0.8 1.4 0.8 3.3 0.8 4.3 0.8 4.1 50"/><line x1="7" y1="17.5" x2="40.5" y2="17.5" stroke="#858585" stroke-width="1" stroke-dasharray="4.1 0.8 6.5 0.8 3.3 0.8 2.3 0.8 3.3 0.8 3.3 0.8 6.6 50"/><line x1="7" y1="20.5" x2="39.1" y2="20.5" stroke="#858585" stroke-width="1" stroke-dasharray="12 0.8 2.3 0.8 5.5 0.8 4.3 0.8 1.6 0.8 3 50"/><line x1="7" y1="23.5" x2="17.8" y2="23.5" stroke="#858585" stroke-width="1" stroke-dasharray="2 1 7.8 50"/><line x1="7" y1="28.5" x2="39.7" y2="28.5" stroke="#858585" stroke-width="1" stroke-dasharray="3 0.8 2.3 0.8 2.3 0.8 1.2 0.8 2.3 0.8 6 0.8 11 50"/><line x1="7" y1="31.5" x2="36.8" y2="31.5" stroke="#858585" stroke-width="1" stroke-dasharray="5 0.8 5.3 0.8 2.3 0.8 4.3 0.8 7.2 0.8 2.2 50"/><line x1="7" y1="34.5" x2="39.1" y2="34.5" stroke="#858585" stroke-width="1" stroke-dasharray="12 0.8 2.3 0.8 5.5 0.8 4.3 0.8 1.6 0.8 3 50"/><line x1="7" y1="37.5" x2="35" y2="37.5" stroke="#858585" stroke-width="1" stroke-dasharray="5 0.8 3.3 0.8 2.3 0.8 1.4 0.8 3.3 0.8 4.3 0.8 4.1 50"/><line x1="7" y1="42.5" x2="40.5" y2="42.5" stroke="#858585" stroke-width="1" stroke-dasharray="4.1 0.8 6.5 0.8 3.3 0.8 2.3 0.8 3.3 0.8 3.3 0.8 6.6 50"/><line x1="7" y1="45.5" x2="35" y2="45.5" stroke="#858585" stroke-width="1" stroke-dasharray="5 0.8 3.3 0.8 2.3 0.8 1.4 0.8 3.3 0.8 4.3 0.8 4.1 50"/><line x1="7" y1="48.5" x2="37.8" y2="48.5" stroke="#858585" stroke-width="1" stroke-dasharray="5 0.8 5.3 0.8 2.3 0.8 4.3 0.8 7.2 0.8 2.2 50"/><line x1="7" y1="51.5" x2="29.8" y2="51.5" stroke="#858585" stroke-width="1" stroke-dasharray="3 0.8 2.3 0.8 2.3 0.8 1.2 0.8 2.3 0.8 6 0.8 7 50"/></svg>
<div class="t" style="left:1234.5px;width:130px;text-align:center;top:703.38px;font-size:13.33px;color:#3a3a3a;font-weight:normal;">.gtkrc-xfce</div>
<svg style="position:absolute;left:885px;top:763px;" width="48" height="60" viewBox="0 0 48 60"><rect x="0.5" y="0.5" width="47" height="59" fill="#f9f9f9" stroke="#a6a6a6"/><line x1="7" y1="11.5" x2="35.8" y2="11.5" stroke="#858585" stroke-width="1" stroke-dasharray="3 0.8 2.3 0.8 2.3 0.8 1.2 0.8 2.3 0.8 6 0.8 7 50"/><line x1="7" y1="14.5" x2="35" y2="14.5" stroke="#858585" stroke-width="1" stroke-dasharray="5 0.8 3.3 0.8 2.3 0.8 1.4 0.8 3.3 0.8 4.3 0.8 4.1 50"/><line x1="7" y1="17.5" x2="40.5" y2="17.5" stroke="#858585" stroke-width="1" stroke-dasharray="4.1 0.8 6.5 0.8 3.3 0.8 2.3 0.8 3.3 0.8 3.3 0.8 6.6 50"/><line x1="7" y1="20.5" x2="39.1" y2="20.5" stroke="#858585" stroke-width="1" stroke-dasharray="12 0.8 2.3 0.8 5.5 0.8 4.3 0.8 1.6 0.8 3 50"/><line x1="7" y1="23.5" x2="17.8" y2="23.5" stroke="#858585" stroke-width="1" stroke-dasharray="2 1 7.8 50"/><line x1="7" y1="28.5" x2="39.7" y2="28.5" stroke="#858585" stroke-width="1" stroke-dasharray="3 0.8 2.3 0.8 2.3 0.8 1.2 0.8 2.3 0.8 6 0.8 11 50"/><line x1="7" y1="31.5" x2="36.8" y2="31.5" stroke="#858585" stroke-width="1" stroke-dasharray="5 0.8 5.3 0.8 2.3 0.8 4.3 0.8 7.2 0.8 2.2 50"/><line x1="7" y1="34.5" x2="39.1" y2="34.5" stroke="#858585" stroke-width="1" stroke-dasharray="12 0.8 2.3 0.8 5.5 0.8 4.3 0.8 1.6 0.8 3 50"/><line x1="7" y1="37.5" x2="35" y2="37.5" stroke="#858585" stroke-width="1" stroke-dasharray="5 0.8 3.3 0.8 2.3 0.8 1.4 0.8 3.3 0.8 4.3 0.8 4.1 50"/><line x1="7" y1="42.5" x2="40.5" y2="42.5" stroke="#858585" stroke-width="1" stroke-dasharray="4.1 0.8 6.5 0.8 3.3 0.8 2.3 0.8 3.3 0.8 3.3 0.8 6.6 50"/><line x1="7" y1="45.5" x2="35" y2="45.5" stroke="#858585" stroke-width="1" stroke-dasharray="5 0.8 3.3 0.8 2.3 0.8 1.4 0.8 3.3 0.8 4.3 0.8 4.1 50"/><line x1="7" y1="48.5" x2="37.8" y2="48.5" stroke="#858585" stroke-width="1" stroke-dasharray="5 0.8 5.3 0.8 2.3 0.8 4.3 0.8 7.2 0.8 2.2 50"/><line x1="7" y1="51.5" x2="29.8" y2="51.5" stroke="#858585" stroke-width="1" stroke-dasharray="3 0.8 2.3 0.8 2.3 0.8 1.2 0.8 2.3 0.8 6 0.8 7 50"/></svg>
<svg style="position:absolute;left:1275px;top:763px;" width="48" height="60" viewBox="0 0 48 60"><rect x="0.5" y="0.5" width="47" height="59" fill="#f9f9f9" stroke="#a6a6a6"/><line x1="7" y1="11.5" x2="35.8" y2="11.5" stroke="#858585" stroke-width="1" stroke-dasharray="3 0.8 2.3 0.8 2.3 0.8 1.2 0.8 2.3 0.8 6 0.8 7 50"/><line x1="7" y1="14.5" x2="35" y2="14.5" stroke="#858585" stroke-width="1" stroke-dasharray="5 0.8 3.3 0.8 2.3 0.8 1.4 0.8 3.3 0.8 4.3 0.8 4.1 50"/><line x1="7" y1="17.5" x2="40.5" y2="17.5" stroke="#858585" stroke-width="1" stroke-dasharray="4.1 0.8 6.5 0.8 3.3 0.8 2.3 0.8 3.3 0.8 3.3 0.8 6.6 50"/><line x1="7" y1="20.5" x2="39.1" y2="20.5" stroke="#858585" stroke-width="1" stroke-dasharray="12 0.8 2.3 0.8 5.5 0.8 4.3 0.8 1.6 0.8 3 50"/><line x1="7" y1="23.5" x2="17.8" y2="23.5" stroke="#858585" stroke-width="1" stroke-dasharray="2 1 7.8 50"/><line x1="7" y1="28.5" x2="39.7" y2="28.5" stroke="#858585" stroke-width="1" stroke-dasharray="3 0.8 2.3 0.8 2.3 0.8 1.2 0.8 2.3 0.8 6 0.8 11 50"/><line x1="7" y1="31.5" x2="36.8" y2="31.5" stroke="#858585" stroke-width="1" stroke-dasharray="5 0.8 5.3 0.8 2.3 0.8 4.3 0.8 7.2 0.8 2.2 50"/><line x1="7" y1="34.5" x2="39.1" y2="34.5" stroke="#858585" stroke-width="1" stroke-dasharray="12 0.8 2.3 0.8 5.5 0.8 4.3 0.8 1.6 0.8 3 50"/><line x1="7" y1="37.5" x2="35" y2="37.5" stroke="#858585" stroke-width="1" stroke-dasharray="5 0.8 3.3 0.8 2.3 0.8 1.4 0.8 3.3 0.8 4.3 0.8 4.1 50"/><line x1="7" y1="42.5" x2="40.5" y2="42.5" stroke="#858585" stroke-width="1" stroke-dasharray="4.1 0.8 6.5 0.8 3.3 0.8 2.3 0.8 3.3 0.8 3.3 0.8 6.6 50"/><line x1="7" y1="45.5" x2="35" y2="45.5" stroke="#858585" stroke-width="1" stroke-dasharray="5 0.8 3.3 0.8 2.3 0.8 1.4 0.8 3.3 0.8 4.3 0.8 4.1 50"/><line x1="7" y1="48.5" x2="37.8" y2="48.5" stroke="#858585" stroke-width="1" stroke-dasharray="5 0.8 5.3 0.8 2.3 0.8 4.3 0.8 7.2 0.8 2.2 50"/><line x1="7" y1="51.5" x2="29.8" y2="51.5" stroke="#858585" stroke-width="1" stroke-dasharray="3 0.8 2.3 0.8 2.3 0.8 1.2 0.8 2.3 0.8 6 0.8 7 50"/></svg>
<svg style="position:absolute;left:487px;top:767px;" width="44" height="50" viewBox="0 0 44 50"><path d="M3 0H29L44 15V50H0V3Q0 0 3 0Z" fill="#f5f4f2"/><path d="M29 0V12Q29 15 32 15H44Z" fill="#dddcd9"/></svg>
<svg style="position:absolute;left:1017px;top:767px;" width="44" height="50" viewBox="0 0 44 50"><path d="M3 0H29L44 15V50H0V3Q0 0 3 0Z" fill="#f5f4f2"/><path d="M29 0V12Q29 15 32 15H44Z" fill="#dddcd9"/></svg>
<svg style="position:absolute;left:617px;top:763px;" width="48" height="60" viewBox="0 0 48 60"><rect x="0.5" y="0.5" width="47" height="59" fill="#f9f9f9" stroke="#a3a3a3"/><rect x="8" y="7" width="4" height="4" fill="#c4c4c4"/><rect x="8" y="15" width="4" height="4" fill="#c4c4c4"/><rect x="8" y="23" width="4" height="4" fill="#c4c4c4"/><rect x="8" y="31" width="4" height="4" fill="#c4c4c4"/><rect x="8" y="39" width="4" height="4" fill="#c4c4c4"/><rect x="12" y="11" width="4" height="4" fill="#c4c4c4"/><rect x="12" y="19" width="4" height="4" fill="#c4c4c4"/><rect x="12" y="27" width="4" height="4" fill="#c4c4c4"/><rect x="12" y="35" width="4" height="4" fill="#c4c4c4"/><rect x="12" y="43" width="4" height="4" fill="#c4c4c4"/><rect x="16" y="7" width="4" height="4" fill="#c4c4c4"/><rect x="16" y="15" width="4" height="4" fill="#c4c4c4"/><rect x="16" y="23" width="4" height="4" fill="#c4c4c4"/><rect x="16" y="31" width="4" height="4" fill="#c4c4c4"/><rect x="16" y="39" width="4" height="4" fill="#c4c4c4"/><rect x="20" y="11" width="4" height="4" fill="#c4c4c4"/><rect x="20" y="19" width="4" height="4" fill="#c4c4c4"/><rect x="20" y="27" width="4" height="4" fill="#c4c4c4"/><rect x="20" y="35" width="4" height="4" fill="#c4c4c4"/><rect x="20" y="43" width="4" height="4" fill="#c4c4c4"/><rect x="24" y="7" width="4" height="4" fill="#c4c4c4"/><rect x="24" y="15" width="4" height="4" fill="#c4c4c4"/><rect x="24" y="23" width="4" height="4" fill="#c4c4c4"/><rect x="24" y="31" width="4" height="4" fill="#c4c4c4"/><rect x="24" y="39" width="4" height="4" fill="#c4c4c4"/><rect x="28" y="11" width="4" height="4" fill="#c4c4c4"/><rect x="28" y="19" width="4" height="4" fill="#c4c4c4"/><rect x="28" y="27" width="4" height="4" fill="#c4c4c4"/><rect x="28" y="35" width="4" height="4" fill="#c4c4c4"/><rect x="28" y="43" width="4" height="4" fill="#c4c4c4"/><rect x="32" y="7" width="4" height="4" fill="#c4c4c4"/><rect x="32" y="15" width="4" height="4" fill="#c4c4c4"/><rect x="32" y="23" width="4" height="4" fill="#c4c4c4"/><rect x="32" y="31" width="4" height="4" fill="#c4c4c4"/><rect x="32" y="39" width="4" height="4" fill="#c4c4c4"/><rect x="36" y="11" width="4" height="4" fill="#c4c4c4"/><rect x="36" y="19" width="4" height="4" fill="#c4c4c4"/><rect x="36" y="27" width="4" height="4" fill="#c4c4c4"/><rect x="36" y="35" width="4" height="4" fill="#c4c4c4"/><rect x="36" y="43" width="4" height="4" fill="#c4c4c4"/></svg>
<svg style="position:absolute;left:1145px;top:763px;" width="48" height="60" viewBox="0 0 48 60"><rect x="0.5" y="0.5" width="47" height="59" fill="#f9f9f9" stroke="#a3a3a3"/><rect x="8" y="7" width="4" height="4" fill="#c4c4c4"/><rect x="8" y="15" width="4" height="4" fill="#c4c4c4"/><rect x="8" y="23" width="4" height="4" fill="#c4c4c4"/><rect x="8" y="31" width="4" height="4" fill="#c4c4c4"/><rect x="8" y="39" width="4" height="4" fill="#c4c4c4"/><rect x="12" y="11" width="4" height="4" fill="#c4c4c4"/><rect x="12" y="19" width="4" height="4" fill="#c4c4c4"/><rect x="12" y="27" width="4" height="4" fill="#c4c4c4"/><rect x="12" y="35" width="4" height="4" fill="#c4c4c4"/><rect x="12" y="43" width="4" height="4" fill="#c4c4c4"/><rect x="16" y="7" width="4" height="4" fill="#c4c4c4"/><rect x="16" y="15" width="4" height="4" fill="#c4c4c4"/><rect x="16" y="23" width="4" height="4" fill="#c4c4c4"/><rect x="16" y="31" width="4" height="4" fill="#c4c4c4"/><rect x="16" y="39" width="4" height="4" fill="#c4c4c4"/><rect x="20" y="11" width="4" height="4" fill="#c4c4c4"/><rect x="20" y="19" width="4" height="4" fill="#c4c4c4"/><rect x="20" y="27" width="4" height="4" fill="#c4c4c4"/><rect x="20" y="35" width="4" height="4" fill="#c4c4c4"/><rect x="20" y="43" width="4" height="4" fill="#c4c4c4"/><rect x="24" y="7" width="4" height="4" fill="#c4c4c4"/><rect x="24" y="15" width="4" height="4" fill="#c4c4c4"/><rect x="24" y="23" width="4" height="4" fill="#c4c4c4"/><rect x="24" y="31" width="4" height="4" fill="#c4c4c4"/><rect x="24" y="39" width="4" height="4" fill="#c4c4c4"/><rect x="28" y="11" width="4" height="4" fill="#c4c4c4"/><rect x="28" y="19" width="4" height="4" fill="#c4c4c4"/><rect x="28" y="27" width="4" height="4" fill="#c4c4c4"/><rect x="28" y="35" width="4" height="4" fill="#c4c4c4"/><rect x="28" y="43" width="4" height="4" fill="#c4c4c4"/><rect x="32" y="7" width="4" height="4" fill="#c4c4c4"/><rect x="32" y="15" width="4" height="4" fill="#c4c4c4"/><rect x="32" y="23" width="4" height="4" fill="#c4c4c4"/><rect x="32" y="31" width="4" height="4" fill="#c4c4c4"/><rect x="32" y="39" width="4" height="4" fill="#c4c4c4"/><rect x="36" y="11" width="4" height="4" fill="#c4c4c4"/><rect x="36" y="19" width="4" height="4" fill="#c4c4c4"/><rect x="36" y="27" width="4" height="4" fill="#c4c4c4"/><rect x="36" y="35" width="4" height="4" fill="#c4c4c4"/><rect x="36" y="43" width="4" height="4" fill="#c4c4c4"/></svg>
<div style="position:absolute;left:307px;top:810px;width:532px;height:1px;background-image:linear-gradient(to right,#bdbdbd 50%,transparent 50%);background-size:10px 1px;"></div>
<div style="position:absolute;left:840px;top:810px;width:520px;height:1px;background-image:linear-gradient(to right,#bdbdbd 50%,transparent 50%);background-size:10px 1px;"></div>
<div style="position:absolute;left:1360px;top:122px;width:4px;height:542px;background:#bababa;border-radius:2px;"></div>
<div style="position:absolute;left:1364px;top:119px;width:1px;height:722px;background:#fbfbfb;"></div>
<div style="position:absolute;left:136px;top:812px;width:1229px;height:1px;background:#d2d2d2;"></div>
<div style="position:absolute;left:136px;top:813px;width:1229px;height:27px;background:#f4f4f4;"></div>
<div style="position:absolute;left:136px;top:840px;width:1229px;height:1px;background:#ffffff;"></div>
<div style="position:absolute;left:140px;top:815px;width:26px;height:24px;background:#cfcfcf;border:1px solid #b9b9b9;border-radius:4px;box-sizing:border-box;"></div>
<svg style="position:absolute;left:147px;top:822px;" width="11" height="9" viewBox="0 0 11 9"><path d="M0 0H3.6L4.4 0.9H9.8V1.9H1.3V9H0Z" fill="#1a1a1a"/><rect x="2.2" y="3" width="8.8" height="6" fill="#1a1a1a"/></svg>
<div style="position:absolute;left:170px;top:815px;width:26px;height:24px;background:#fafafa;border:1px solid #c8c8c8;border-radius:4px;box-sizing:border-box;"></div>
<svg style="position:absolute;left:178px;top:822px;" width="10" height="10" viewBox="0 0 10 10"><circle cx="1.7" cy="1.5" r="1.5" fill="#1a1a1a"/><path d="M1.7 1V8.8H9M1.7 4.3H9M1.7 6.5H7.5" stroke="#1a1a1a" stroke-width="1.1" fill="none"/><path d="M1.7 6.5H7.5" stroke="#888" stroke-width="1"/><circle cx="8.6" cy="4.3" r="1.1" fill="#1a1a1a"/><circle cx="8.6" cy="8.8" r="1.1" fill="#1a1a1a"/></svg>
<div style="position:absolute;left:204px;top:815px;width:1px;height:24px;background:#dcdcdc;"></div>
<div style="position:absolute;left:213px;top:815px;width:26px;height:24px;background:#fafafa;border:1px solid #c8c8c8;border-radius:4px;box-sizing:border-box;"></div>
<svg style="position:absolute;left:220px;top:822px;" width="11" height="9.5" viewBox="0 0 11 9.5"><rect x="0.75" y="0.75" width="9.5" height="8.3" rx="1" stroke="#1a1a1a" stroke-width="1.5" fill="none"/><path d="M5.4 2.2L2.3 4.9L5.4 7.6Z" fill="#1a1a1a"/><rect x="5.4" y="2.2" width="1.4" height="5.4" fill="#1a1a1a"/></svg>
<div class="t" style="left:550.5px;width:400px;text-align:center;top:818.38px;font-size:13.33px;color:#2e2e2e;font-weight:normal;letter-spacing:-0.15px;">25 items, Free space: 3.9 GB</div>
<div style="position:absolute;left:1264px;top:824px;width:94px;height:5px;background:#c4c4c4;border-radius:3px;"></div>
<div style="position:absolute;left:1264px;top:824px;width:46px;height:5px;background:#1f9ede;border-radius:3px 0 0 3px;"></div>
<div style="position:absolute;left:1301.5px;top:817.8px;width:17px;height:17px;background:#f8f8f8;border:1px solid #b3b3b3;border-radius:50%;box-sizing:border-box;"></div>
<div style="position:absolute;left:0px;top:858px;width:1433px;height:37px;background:#1b1b1b;"></div>
<div style="position:absolute;left:0px;top:858px;width:1433px;height:1px;background:#262626;"></div>
<svg style="position:absolute;left:3px;top:862px;" width="32" height="32" viewBox="0 0 32 32"><circle cx="16" cy="15.8" r="14.3" stroke="#e4e4e4" stroke-width="2.8" fill="none"/><path d="M8.6 8V18Q8.6 22.5 13 22.5H19Q23.2 22.5 23.2 18.5V13.5Q23.2 9.8 19.5 9.8H13.3V19" stroke="#e4e4e4" stroke-width="2.8" fill="none"/><path d="M18.4 10V19" stroke="#e4e4e4" stroke-width="2.6"/></svg>
<div style="position:absolute;left:49px;top:860px;width:1px;height:35px;background:#3a3a3a;"></div>
<div style="position:absolute;left:58px;top:859px;width:38px;height:36px;background:#555555;"></div>
<svg style="position:absolute;left:63px;top:864px;" width="28" height="25" viewBox="0 0 56 50"><path d="M3 0H20.5L27 6H53Q56 6 56 9V30H0V3Q0 0 3 0Z" fill="#e1a94f"/><rect x="4" y="9" width="48" height="14" rx="2" fill="#e3e3e3"/><rect x="0" y="14.5" width="56" height="35" rx="3" fill="#d9cdb8"/><rect x="0" y="14" width="56" height="35" rx="3" fill="#f7c46f"/></svg>
<svg style="position:absolute;left:107px;top:863px;" width="28" height="28" viewBox="0 0 28 28"><defs><linearGradient id="ff" x1="0" y1="0" x2="0" y2="28" gradientUnits="userSpaceOnUse"><stop offset="0" stop-color="#ff7b38"/><stop offset="1" stop-color="#ff3b63"/></linearGradient></defs><rect width="28" height="28" rx="6" fill="url(#ff)"/><circle cx="14" cy="14.7" r="9.8" fill="#fff"/><path d="M2 2H12.9V4.2L11.2 10L10.2 8.2L8.4 9.3L7.3 7L4.4 12.5L2 12.5Z" fill="url(#ff)"/><path d="M12.9 2V4.2L18.2 9.2L22.5 9.8L26 2Z" fill="url(#ff)"/><path d="M10.4 10.8Q13.4 9.8 16 11.6L15 13.2L11 13Z" fill="#ff6548"/><circle cx="13.9" cy="15.6" r="4.2" fill="#ff5750"/></svg>
<svg style="position:absolute;left:151px;top:863px;" width="28" height="28" viewBox="0 0 28 28"><defs><linearGradient id="tg" x1="0" y1="0" x2="0" y2="1"><stop offset="0" stop-color="#2a2a2a"/><stop offset="1" stop-color="#1e1e1e"/></linearGradient></defs><rect x="0.5" y="0.5" width="27" height="27" rx="6" fill="url(#tg)" stroke="#3a3a3a"/><path d="M7 4.2Q4 3.6 4 5.3Q4 6.4 5.5 6.6Q7.2 7 7.2 8.2Q7.2 9.8 4 9.3" stroke="#eee" stroke-width="1.1" fill="none"/><path d="M5.6 2.8V10.6" stroke="#eee" stroke-width="0.9"/><rect x="9" y="10" width="6.5" height="1.2" fill="#eee"/></svg>
<svg style="position:absolute;left:1250px;top:870px;" width="15" height="16" viewBox="0 0 15 16"><rect x="1" y="2.5" width="13" height="12.5" rx="1.5" stroke="#e8e8e8" stroke-width="1.8" fill="none"/><rect x="4.5" y="0.5" width="6" height="3" rx="1" fill="#e8e8e8"/><rect x="6.7" y="5.5" width="1.8" height="5" fill="#e8e8e8"/><rect x="6.7" y="11.5" width="1.8" height="1.8" fill="#e8e8e8"/></svg>
<svg style="position:absolute;left:1275px;top:870px;" width="17" height="17" viewBox="0 0 17 17"><path d="M8 0.5L15 3V8Q15 13 8 16Q1 13 1 8V3Z" stroke="#e8e8e8" stroke-width="1.6" fill="none"/><path d="M8 3L12.5 4.8V8.5Q12.5 12 8 13.8Z" fill="#888"/><path d="M8 3L3.5 4.8V8.5Q3.5 12 8 13.8Z" fill="#d0d0d0"/><circle cx="13" cy="13.2" r="3" fill="#f46b2f"/></svg>
<svg style="position:absolute;left:1306px;top:871px;" width="13" height="15" viewBox="0 0 13 15"><path d="M6.5 0.5Q11 0.5 11 6V10L12.5 12H0.5L2 10V6Q2 0.5 6.5 0.5Z" fill="#e8e8e8"/><rect x="5" y="13" width="3" height="2" rx="1" fill="#e8e8e8"/></svg>
<svg style="position:absolute;left:1332px;top:870px;" width="17" height="17" viewBox="0 0 17 17"><rect x="6" y="0.5" width="5" height="4.5" fill="#e8e8e8"/><rect x="8" y="5" width="1.4" height="3" fill="#e8e8e8"/><rect x="2" y="7.5" width="13" height="1.5" fill="#e8e8e8"/><rect x="2" y="8.5" width="1.4" height="3" fill="#e8e8e8"/><rect x="13.6" y="8.5" width="1.4" height="3" fill="#e8e8e8"/><rect x="0" y="11.5" width="5.5" height="4.5" fill="#e8e8e8"/><rect x="11.5" y="11.5" width="5.5" height="4.5" fill="#e8e8e8"/></svg>
<svg style="position:absolute;left:1360px;top:871px;" width="17" height="15" viewBox="0 0 17 15"><path d="M0.5 5H3.5L8 0.5V14.5L3.5 10H0.5Z" fill="#e8e8e8"/><path d="M10 4.5Q12 7.5 10 10.5" stroke="#e8e8e8" stroke-width="1.5" fill="none"/><path d="M12.5 2Q16 7.5 12.5 13" stroke="#777" stroke-width="1.5" fill="none"/></svg>
<div class="t" style="left:1388px;top:868.63px;font-size:12.6px;color:#e4e4e4;font-weight:bold;">17:35</div>
<div style="position:absolute;left:1427px;top:858px;width:6px;height:37px;background:#2e2e2e;"></div>
<div style="position:absolute;left:136px;top:15px;width:1229px;height:826px;border:1px solid rgba(255,255,255,0.85);border-radius:6px 6px 0 0;box-sizing:border-box;"></div>
</body></html>
